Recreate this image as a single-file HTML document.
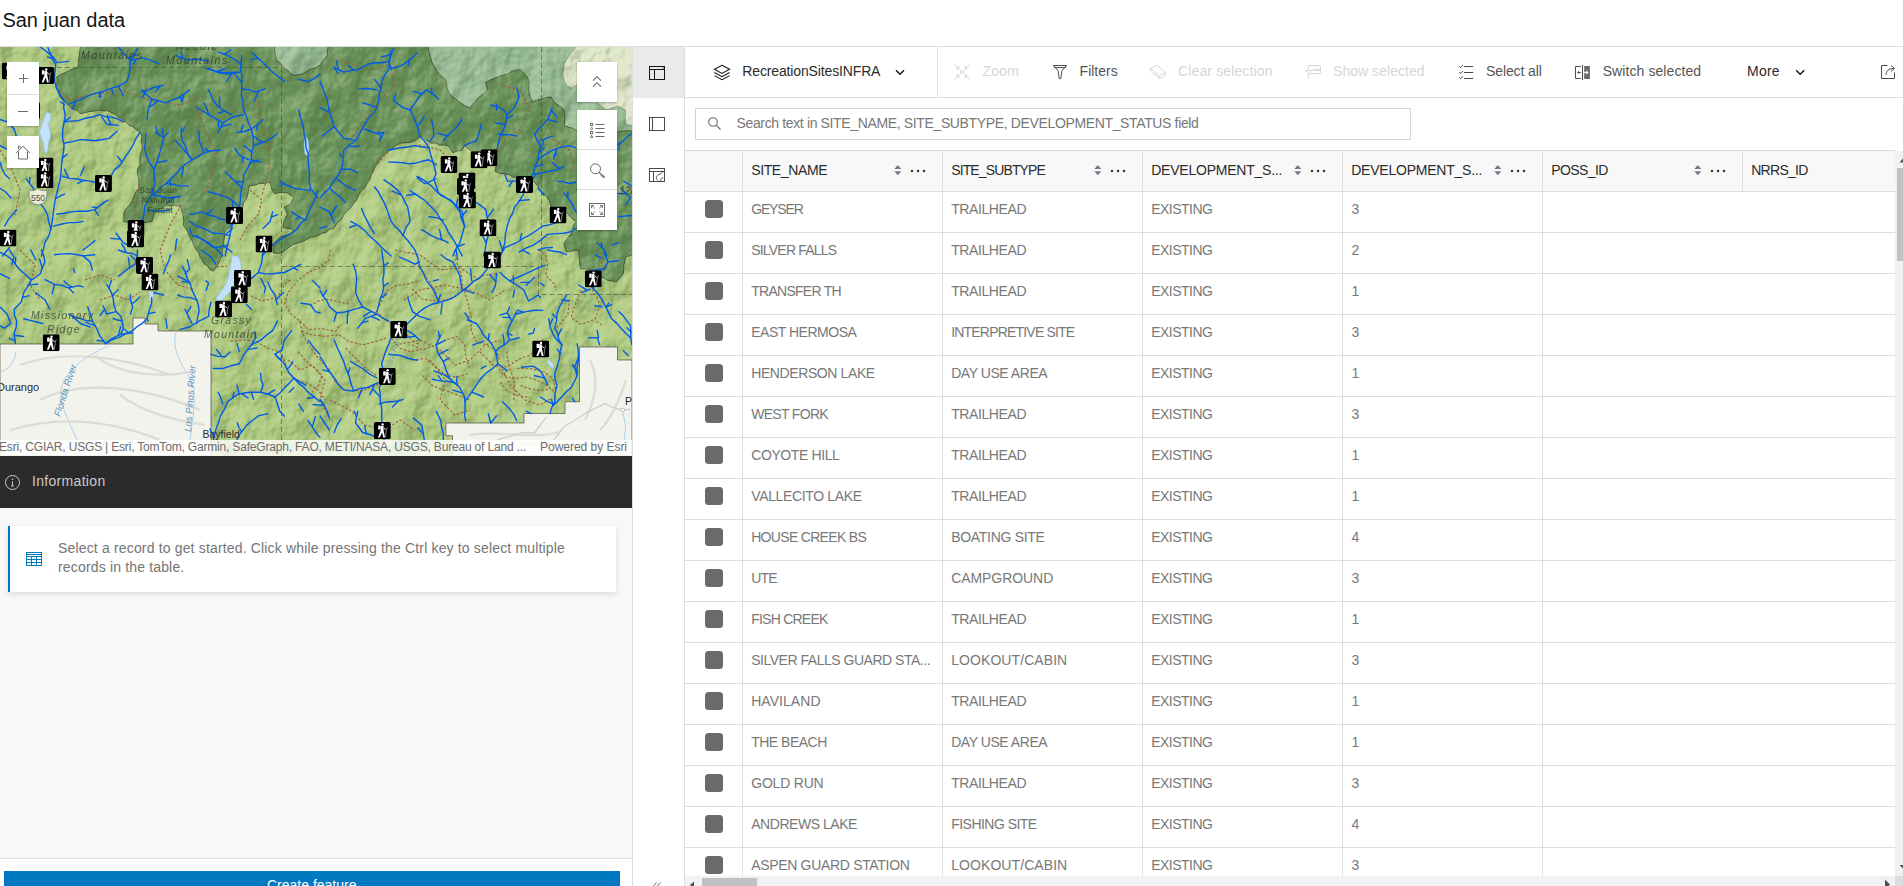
<!DOCTYPE html>
<html lang="en"><head><meta charset="utf-8"><title>San juan data</title>
<style>
html,body{margin:0;padding:0;}
body{width:1903px;height:886px;overflow:hidden;background:#fff;position:relative;font-family:"Liberation Sans",sans-serif;}
.t{position:absolute;white-space:nowrap;}
.b{position:absolute;}
svg{position:absolute;overflow:visible;}
</style></head><body>

<div class="t" style="left:2.5px;top:6.07px;font-size:20px;line-height:28px;color:#151515;letter-spacing:-0.072px;">San juan data</div>
<div class="b" style="left:0;top:46px;width:1903px;height:1px;background:#dedede"></div>
<div class="b" id="map" style="left:0;top:47px;width:632px;height:409px;overflow:hidden;background:#acc67f">
<svg style="left:0;top:0" width="632" height="409" viewBox="0 47 632 409">
<defs>
<filter id="hs" x="0" y="0" width="100%" height="100%" color-interpolation-filters="sRGB"><feTurbulence type="fractalNoise" baseFrequency="0.028 0.024" numOctaves="4" seed="11" result="n"/><feDiffuseLighting in="n" surfaceScale="9" diffuseConstant="1" lighting-color="#fff" result="L"><feDistantLight azimuth="225" elevation="30"/></feDiffuseLighting><feColorMatrix in="L" type="matrix" values="0 0 0 0 0.17  0 0 0 0 0.29  0 0 0 0 0.09  -0.85 0 0 0 0.425" result="D"/><feColorMatrix in="L" type="matrix" values="0 0 0 0 0.95  0 0 0 0 0.99  0 0 0 0 0.8  1.1 0 0 0 -0.55" result="W"/><feMerge><feMergeNode in="D"/><feMergeNode in="W"/></feMerge></filter>
<symbol id="hk" viewBox="0 0 17 17"><rect width="17" height="17" rx="1.8" fill="#000"/><circle cx="8.800" cy="2.400" r="1.200" fill="#fff"/><rect x="4.400" y="3.300" width="2.500" height="4.200" rx=".5" fill="#fff"/><path d="M7 3.800h2.600l.2 4.500 1.400 7.100h-1.700l-1.200-5-2.300 5h-1.800l2.700-7.200z" fill="#fff"/><path d="M9.500 5.600l2.600 1.900" stroke="#fff" stroke-width=".9" fill="none"/><path d="M13.500 5.200l-.9 3-1 7.200" stroke="#ddd" stroke-width=".6" fill="none"/></symbol>
</defs>
<rect x="0" y="47" width="632" height="409" fill="#aec981"/>
<path d="M428 40 L428 46 L428.7 50.0 L429.7 53.9 L430.6 57.9 L432.1 62.8 L434.6 67.1 L437.4 71.4 L439.8 74.6 L442.8 77.3 L445.9 79.9 L446.4 84.6 L447.4 89.1 L449.3 93.4 L452.3 96.6 L456.0 99.1 L459.4 101.9 L464.1 105.6 L469.6 107.8 L472.8 104.0 L476.1 100.2 L479.7 96.8 L483.9 93.8 L487.4 90 L485.7 82.4 L489.8 80.2 L494.2 78.6 L498.4 76.5 L503.1 75.4 L507.7 73.9 L511.9 71.4 L516.1 70.2 L520.4 69.7 L523.4 72.9 L526.4 76.2 L528.8 79.9 L529.0 85.8 L528.8 91.7 L530.4 96.8 L532.2 101.9 L536.8 100.3 L541.5 99.2 L546.1 97.6 L550.9 96.8 L553.0 100.6 L556 103.6 L560.5 106.7 L564.4 110.4 L564.8 115.5 L564.7 120.5 L564.4 125.6 L568.6 127.3 L573.1 128.3 L577 130.7 L581.6 130.2 L586.2 131.4 L590.8 130.8 L595.4 130.9 L600 131 L604.5 130.4 L608.9 130.6 L613.4 131.4 L617.8 132 L622.5 131.0 L627.2 130.7 L632 131 L640 131 L640 40Z" fill="#97ba97"/>
<path d="M275 40 L275 46 L274.5 50.8 L275.5 55.5 L276.1 60.2 L280.1 62.8 L282.8 66.9 L286.7 69.6 L290.1 72.8 L293.9 75.6 L297.9 74.6 L302.1 74.1 L305.8 72.1 L310.2 69.1 L315.5 67.8 L320 65 L323.4 60.2 L327.1 55.5 L327.5 50.7 L328.3 46 L328.3 40Z" fill="#97ba97"/>
<path d="M577 40 L577 46 L571.2 52.8 L564.4 62.9 L562.7 74.8 L566.1 85 L571.2 88.3 L577 85 L590 96 L598 103 L606 110 L618 106 L625.4 110 L625.4 124 L632 126 L640 126 L640 40Z" fill="#dfe6cb" stroke="#6a6a55" stroke-width=".5"/>
<path d="M80.6 46 L79.8 50.7 L79.4 55.5 L78.4 61.4 L78.2 67.3 L73.7 68.7 L69.4 70.4 L65.2 72.6 L60.9 74.2 L56.9 76.8 L57.1 81.7 L55.7 86.3 L57.6 91.0 L59.3 95.8 L61.9 99.5 L65.4 102.3 L68.7 105.3 L72.3 108.7 L77.0 110.3 L80.6 113.6 L85.3 112.6 L90.0 111.4 L94.9 111.0 L99.6 110 L103.5 110.9 L107.6 110.7 L111.4 112.4 L115.2 114.3 L118.5 117.1 L122.3 119.2 L125.6 121.9 L128.7 124.9 L132.7 126.6 L136.6 129.9 L141 132.5 L142.0 136.8 L141.3 141.3 L142.2 145.6 L142.1 149.7 L140.5 153.4 L139.9 157.4 L140.0 161.6 L139.6 165.8 L137.4 169.8 L137.5 174 L138.4 178.7 L138.8 183.4 L138.7 188.2 L135.9 191.8 L134.1 195.8 L132.7 200.1 L129.5 205.1 L125.6 209.6 L124.0 213.4 L124.0 217.5 L123.3 221.4 L128.0 222.3 L132.7 222.6 L138.6 222.1 L144.6 222.6 L151.7 221.4 L153.7 216.8 L154.1 211.9 L158.2 209.8 L162.4 207.9 L165.9 204.8 L170.5 206.0 L175.3 205.5 L180 206.4 L181.8 211.0 L183.2 215.8 L183.8 220.6 L183.2 225.3 L185.9 228.7 L188.1 232.3 L189.5 236.4 L191.9 240.4 L193.5 244.9 L195.8 249 L198.6 252.1 L199.5 256.3 L202.0 259.6 L203.7 263.3 L207.1 265.7 L209.7 269.0 L213.2 271.2 L217.9 264.8 L219.9 260.0 L221.9 255.3 L222.4 250.5 L223.5 245.9 L223.7 241.7 L224.4 237.5 L224.3 233.2 L226.3 229.5 L230.2 227.4 L232.2 223.7 L234.0 219.3 L237.7 216.0 L240.4 212.2 L242.4 207.9 L243.5 202.8 L246.6 198.6 L248 193.7 L248.5 189.7 L249.5 185.8 L254.8 185.1 L259.9 183.3 L265.3 183.4 L270 181.9 L271.7 189 L274.8 193.7 L279.0 192.6 L283.2 192.6 L287.5 192.9 L293.8 197.7 L290.6 204 L284.3 207.1 L287.5 214.3 L284.3 220.6 L282.7 226.9 L286.5 228.5 L290.6 228.5 L293.8 230 L290.6 233.2 L286.1 235.3 L281.2 236.4 L277.7 239.2 L274.8 242.7 L273.3 247.7 L273.3 253 L278.1 253.4 L282.7 252.2 L286.2 249.3 L289.9 246.7 L293.8 244.3 L298.0 242.7 L302.4 241.6 L306.4 239.5 L310.1 237.3 L314.5 236.8 L318.4 235.3 L322.2 233.2 L326.2 232.2 L329.3 229.3 L333.3 228.5 L338 222.2 L341.8 219.2 L343.8 214.6 L347.3 211.3 L350.7 207.9 L353.5 203.8 L356.6 199.9 L358.6 195.3 L361.1 191.2 L364.8 187.8 L367.0 183.5 L369.7 179.5 L371.3 174.6 L373.6 170 L376.2 164.7 L379.3 159.8 L382.8 155.8 L386.7 152.1 L391.1 149.1 L395.5 145.6 L400.6 143.2 L405.4 142.7 L410.2 142.5 L414.8 140.8 L418.0 137.9 L421.9 136.1 L425.5 139.6 L431.4 143.2 L435.7 143.0 L439.6 145.2 L443.8 145.0 L448 145.5 L450.5 149.0 L452.7 152.7 L457.3 151.0 L462.2 150.3 L464.6 145.5 L468.0 148.6 L471.7 151.5 L475.7 153.1 L480.0 153.4 L484.2 154.3 L488.5 154.7 L492.3 157.1 L496.6 157.4 L497.0 162.2 L495.8 166.9 L495.4 171.6 L500.0 173.4 L504.9 174 L509.0 174.6 L512.6 176.8 L516.7 177.6 L520.7 179.3 L525.0 179.6 L529.0 180.7 L533.3 181.1 L537.4 185.4 L540.4 190.6 L544.0 194.1 L547.5 197.7 L549.9 202.2 L551.1 207.2 L554.8 209.0 L558.9 209.2 L562.7 210.6 L566.5 211.9 L569.0 215.7 L572.4 218.7 L576 221.4 L573.6 225.1 L572.9 229.4 L571.3 233.3 L567.7 238.0 L564.1 242.7 L564.9 247.6 L566.5 252.2 L570.5 251.4 L574.4 250.4 L578.4 250 L579.1 255.9 L579.5 261.9 L580.7 269 L586.7 268.9 L592.6 270.1 L596.7 272.7 L600.0 276.4 L604.4 278.4 L608.1 280.4 L612.3 281.0 L616.3 282 L619.8 277.8 L623.4 273.7 L623.7 269.5 L623.9 265.3 L624.8 261.2 L625.8 257.1 L632 254.7 L636.0 254.9 L640 254 L640.7 249.9 L639.8 245.8 L640.5 241.7 L640.5 237.6 L640.4 233.5 L640.3 229.4 L640.5 225.3 L639.8 221.2 L640.4 217.1 L639.6 213.0 L640.0 208.9 L640.5 204.8 L640.3 200.7 L639.6 196.6 L640.8 192.5 L640.3 188.4 L640.1 184.3 L639.1 180.2 L640.1 176.1 L639.6 172.0 L640.3 167.9 L639.9 163.8 L640.6 159.7 L640.3 155.6 L640.5 151.5 L639.7 147.4 L640.3 143.3 L640.4 139.2 L640.6 135.1 L640 131 L636.0 131.3 L632 131 L627.2 130.7 L622.5 131.0 L617.8 132 L613.4 131.4 L608.9 130.6 L604.5 130.4 L600 131 L595.4 130.9 L590.8 130.8 L586.2 131.4 L581.6 130.2 L577 130.7 L573.1 128.3 L568.6 127.3 L564.4 125.6 L564.7 120.5 L564.8 115.5 L564.4 110.4 L560.5 106.7 L556 103.6 L553.0 100.6 L550.9 96.8 L546.1 97.6 L541.5 99.2 L536.8 100.3 L532.2 101.9 L530.4 96.8 L528.8 91.7 L529.0 85.8 L528.8 79.9 L526.4 76.2 L523.4 72.9 L520.4 69.7 L516.1 70.2 L511.9 71.4 L507.7 73.9 L503.1 75.4 L498.4 76.5 L494.2 78.6 L489.8 80.2 L485.7 82.4 L487.4 90 L483.9 93.8 L479.7 96.8 L476.1 100.2 L472.8 104.0 L469.6 107.8 L464.1 105.6 L459.4 101.9 L456.0 99.1 L452.3 96.6 L449.3 93.4 L447.4 89.1 L446.4 84.6 L445.9 79.9 L442.8 77.3 L439.8 74.6 L437.4 71.4 L434.6 67.1 L432.1 62.8 L430.6 57.9 L429.7 53.9 L428.7 50.0 L428 46 L428 40 L328.3 40 L328.3 46 L327.5 50.7 L327.1 55.5 L323.4 60.2 L320 65 L315.5 67.8 L310.2 69.1 L305.8 72.1 L302.1 74.1 L297.9 74.6 L293.9 75.6 L290.1 72.8 L286.7 69.6 L282.8 66.9 L280.1 62.8 L276.1 60.2 L275.5 55.5 L274.5 50.8 L275 46 L275 40 L80.6 40Z" fill="#6a925b" stroke="#38452f" stroke-width=".8" stroke-linejoin="round"/>
<rect x="0" y="47" width="632" height="409" filter="url(#hs)" opacity=".55"/>
<path d="M0 344 L133 344 L133 318 L145 318 L145 324 L158 324 L158 331 L211 331 L211 456 L0 456Z" fill="#f3f3ee" stroke="#4a4a40" stroke-width=".7"/>
<path d="M452.5 456 L452.5 435.7 L445.9 435.7 L445.9 423 L524 423 L524 413.5 L565 413.5 L565 401.7 L579.5 401.7 L579.5 347 L617.5 347 L617.5 360 L632 360 L632 456Z" fill="#f3f3ee" stroke="#4a4a40" stroke-width=".7"/>
<g fill="none" stroke="#3a4432" stroke-width="1" stroke-dasharray="5 3" opacity=".55">
<path d="M57 67.500H281.500V456M281.500 266.500H538.500V294.500H632M541.500 47V266.500"/>
</g>
<g fill="none" stroke="#9d5b3a" stroke-width="1.100" stroke-dasharray="2.500 1.800">
<path d="M404 300 L420 290 L445 285 L470 290 L490 300 L505 290"/>
<path d="M395 345 L420 340 L440 350 L455 365 L470 360 L485 345 L500 340"/>
<path d="M430 360 L445 380 L440 400 L455 415 L470 410"/>
<path d="M500 365 L510 385 L525 400 L540 405 L552 398"/>
<path d="M330 400 L350 410 L365 425 L385 430 L400 420 L415 430"/>
<path d="M395 250 L420 255 L440 270 L460 268 L480 280"/>
<path d="M288 360 L300 370 L312 365 L325 380 L320 400 L330 420"/>
<path d="M100 300 L115 295 L128 300 L140 292"/>
<path d="M85 280 L100 275 L115 280"/>
<path d="M181 205 L170 225 L160 250 L165 270 L178 285 L195 290"/>
<path d="M140 180 L137 200 L133 220 L128 235"/>
<path d="M250 190 L262 200 L258 215 L248 225 L240 240"/>
<path d="M56 87 L70 100 L90 95 L120 90 L150 100 L180 105 L205 95"/>
<path d="M195 105 L205 130 L215 150 L212 175 L205 195"/>
<path d="M258 100 L262 130 L270 150 L268 175 L262 195"/>
<path d="M340 60 L370 70 L390 65 L395 85 L380 100 L365 120 L350 140"/>
<path d="M372 170 L390 150 L420 145 L440 150 L455 165"/>
<path d="M500 85 L520 90 L530 110 L520 130 L505 140 L495 158"/>
<path d="M545 120 L555 140 L570 150 L575 170"/>
<path d="M0 150 L12 170 L20 190 L15 215"/>
<path d="M20 250 L35 265 L30 285 L40 300"/>
<path d="M330.4 250.0 L328.7 260.2 L318.5 268.6 L308.4 272.0 L298.2 280.5 L288.1 292.3 L284.7 304.2 L291.4 314.4 L299.9 321.1 L301.6 331.3 L308.4 344.8 L318.5 358.4 L328.7 368.5 L335.5 382.1 L345.6 390.6 L362.6 390.6 L379.5 383.8"/>
<path d="M299.9 321.1 L308.4 329.6 L321.9 328.7 L335.5 331.3 L340.6 324.5"/>
<path d="M301.6 331.3 L311.8 334.7 L325.3 336.4 L338.9 334.7 L349.0 341.4 L362.6 344.8 L376.1 341.4 L386.3 338.1"/>
<path d="M216.9 266.9 L227.1 266.1"/>
<path d="M250.8 295.7 L261.0 300.8 L271.1 299.1 L279.6 294.0 L284.7 283.9 L291.4 278.8"/>
<path d="M230.5 341.4 L244.0 339.8 L255.9 341.4 L267.7 348.2 L279.6 351.6 L284.7 361.8 L288.1 371.9 L294.8 378.7 L308.4 383.8 L318.5 390.6 L325.3 400.0"/>
<path d="M298.2 351.6 L305.0 360.1 L315.2 368.5 L321.9 375.3 L318.5 385.5 L311.8 392.3"/>
<path d="M376.1 311.0 L382.9 317.7 L389.7 322.8"/>
<path d="M379.5 305.9 L386.3 290.6 L396.4 285.6 L408.3 283.9 L420.0 280.5"/>
<path d="M406.6 334.7 L413.4 341.4 L420.0 344.8"/>
<path d="M391.4 338.1 L399.8 348.2 L410.0 351.6 L420.0 349.9"/>
<path d="M345.6 348.2 L355.8 358.4 L366.0 368.5 L376.1 375.3"/>
<path d="M310.1 305.9 L318.5 300.8 L328.7 299.1 L340.6 302.5 L350.7 304.2"/>
<path d="M412.0 289.0 L422.2 299.1 L435.7 300.8 L451.0 299.1 L462.8 290.6 L473.0 282.2 L483.1 275.4 L496.7 273.7"/>
<path d="M418.8 266.9 L428.9 280.5 L435.7 292.3 L437.4 300.8"/>
<path d="M454.3 250.0 L456.0 260.2 L461.1 273.7 L462.8 289.0"/>
<path d="M464.5 290.6 L467.9 302.5 L471.3 317.7 L471.3 331.3 L476.4 341.4 L486.5 344.8 L496.7 351.6 L500.1 361.8"/>
<path d="M412.0 344.8 L422.2 349.9 L432.3 346.5 L445.9 339.8 L457.7 336.4 L464.5 344.8 L466.2 358.4 L469.6 368.5"/>
<path d="M412.0 360.1 L425.5 358.4 L435.7 366.9 L445.9 375.3 L456.0 377.0 L467.9 373.6"/>
<path d="M422.2 375.3 L432.3 385.5 L445.9 390.6 L459.4 395.6 L469.6 400.0"/>
<path d="M479.7 351.6 L486.5 358.4 L493.3 365.2 L506.8 366.9 L520.4 358.4 L530.5 355.0 L544.1 338.1"/>
<path d="M496.7 365.2 L503.4 375.3 L513.6 378.7 L527.2 377.0 L537.3 380.4 L547.5 385.5 L554.3 392.3"/>
<path d="M506.8 351.6 L508.5 365.2 L513.6 378.7 L515.3 392.3 L513.6 400.0"/>
<path d="M517.0 368.5 L530.5 368.5 L544.1 371.9 L552.6 378.7 L555.9 388.9 L554.3 400.0"/>
<path d="M520.4 385.5 L530.5 388.9 L540.7 390.6 L550.9 388.9"/>
<path d="M500.1 382.1 L506.8 390.6 L517.0 395.6 L530.5 397.3"/>
<path d="M539.0 250.0 L545.8 255.1 L547.5 265.2 L545.8 275.4 L554.3 283.9 L555.9 290.6"/>
<path d="M569.5 299.1 L567.8 314.4 L561.0 322.8 L554.3 329.6"/>
<path d="M581.3 290.6 L574.6 305.9 L571.2 317.7 L581.3 324.5 L594.9 319.4 L600.0 305.9 L596.6 295.7 L591.5 289.0"/>
<path d="M596.6 321.1 L603.4 326.2"/>
<path d="M596.6 255.1 L603.4 265.2 L605.1 270.3"/>
</g>
<g fill="none" stroke="#8cc0ea" stroke-width=".7">
<path d="M108 346C95 352 80 360 70 372S58 395 66 415 78 440 85 456"/><path d="M176 332C172 345 178 360 188 375S194 410 190 440"/><path d="M0 372C8 370 14 364 16 352"/><path d="M622.800 412L625.700 425.400 624.200 440"/>
</g>
<g fill="none" stroke="#d9d9d2" stroke-width="2.2" opacity=".9">
<path d="M20 365C60 350 120 355 170 375M40 400C80 380 140 385 200 410M10 430C60 415 110 420 160 440M95 355C110 370 150 380 190 372M120 395C140 410 170 420 205 425"/>
<path d="M590 360C600 380 595 400 585 420M600 430C610 420 620 400 626 380M470 435C500 430 530 440 560 432M520 445C560 440 600 450 628 440"/>
</g>
<path d="M553.800 440L564 427 587.500 412 605 403.500 614 407.800 622.800 410 632 409.300M496.600 440L523 432.700 534.700 432.700 546.500 416.600" fill="none" stroke="#cfd0d6" stroke-width="1.400"/>
<circle cx="622.800" cy="410" r="1.800" fill="#fff" stroke="#b0b0b8" stroke-width=".8"/>
<g fill="#c4e0fa" stroke="#8cc0ee" stroke-width=".6">
<path d="M47 112L51 114 50.500 120 48 124 50 130 50.500 137 48.500 143 48 150 46 154 44 150 43.500 143 41 138 39.500 131 41.500 126 43 121 45 116Z"/>
<path d="M305.500 136l2.500 4 1 8-1.500 8-2.500-2-1-9z"/>
<path d="M232 256h6l2.500 6 .800 8-1.500 9-4 7-7 7-8 8-5.500 2 1.500-6 6-8 5-9 2.500-12z"/>
<path d="M149 291.500h4l.5 6-2 5.500-2-4z"/>
<path d="M546.500 358.500l5 3.500 2.500 4-1 2.500-4-3z"/>
</g>
<g fill="none" stroke="#005ce6" stroke-width="1.4" stroke-linecap="round" stroke-linejoin="round">
<path d="M47.4 46.0 L51.0 55.5 L55.7 65.0 L54.5 76.8 L55.0 82.9 L56.9 88.7 L60.2 94.7 L64.0 100.5 L63.7 107.7 L65.2 114.7 L64.3 121.9 L62.8 129.0 L62.6 137.4 L64.0 145.6 L63.5 151.9 L62.5 158.2 L61.6 164.5 L61.1 171.6 L60.4 178.7 L58.4 185.8 L56.9 193.0 L55.2 199.2 L54.3 205.6 L53.3 211.9 L52.4 220.2 L51.0 228.5 L48.7 235.9 L45.0 242.7 L43.3 249.4 L41.5 256.0"/>
<path d="M39.1 46.0 L48.6 53.1 L53.4 57.3 L56.9 62.6 L68.7 61.4"/>
<path d="M64.0 121.9 L71.1 121.1 L78.2 120.7 L85.2 118.3 L92.5 117.0 L99.6 114.7 L105.3 116.7 L111.4 117.1 L117.6 118.8 L123.3 121.9"/>
<path d="M101.9 117.1 L106.7 124.2 L118.5 125.4"/>
<path d="M64.0 143.2 L72.3 141.6 L80.6 139.6 L87.7 140.0 L94.8 140.8 L101.9 139.7 L109.0 138.4 L117.3 131.3"/>
<path d="M62.8 176.4 L69.2 178.4 L75.9 178.7 L82.9 180.3 L90.1 181.1 L94.8 182.3"/>
<path d="M80.6 175.2 L84.1 166.9"/>
<path d="M111.4 175.2 L114.7 169.6 L119.9 165.4 L123.3 159.8 L128.1 152.8 L132.7 145.6 L135.8 138.8 L139.9 132.5"/>
<path d="M117.3 156.2 L122.1 162.1"/>
<path d="M56.9 214.3 L64.0 213.3 L71.1 211.9 L79.0 211.1 L87.0 211.2 L94.8 209.6 L104.3 202.4 L107.9 200.1"/>
<path d="M94.8 209.6 L98.4 215.5"/>
<path d="M53.3 226.1 L61.0 224.3 L68.7 222.6 L75.9 222.6 L83.0 221.4"/>
<path d="M0.0 162.1 L1.8 168.3 L4.7 174.0 L9.5 178.7"/>
<path d="M26.1 178.7 L33.2 188.2 L37.9 197.7 L40.7 204.1 L45.0 209.6 L47.7 215.7 L48.7 222.3 L51.0 228.5"/>
<path d="M0.0 188.2 L5.9 192.3 L10.7 197.7"/>
<path d="M16.6 209.6 L12.3 214.9 L7.9 220.1 L4.7 226.1"/>
<path d="M0.0 119.5 L7.1 121.9 L14.2 129.0 L16.6 137.3 L19.0 145.6"/>
<path d="M0.0 145.6 L9.5 150.3"/>
<path d="M68.7 104.1 L74.7 101.9 L80.6 99.3 L87.6 96.1 L94.8 93.4 L101.0 92.4 L106.7 89.9 L112.5 87.9 L118.5 86.3 L126.8 81.6 L128.8 75.8 L129.9 69.7 L130.4 60.2 L123.3 53.1 L118.5 47.2"/>
<path d="M130.4 60.2 L136.4 59.4 L142.2 57.9 L150.8 60.1 L158.8 63.8"/>
<path d="M130.4 60.2 L135.1 53.1 L137.5 48.4"/>
<path d="M99.6 92.2 L100.7 97.0"/>
<path d="M111.4 88.7 L113.8 94.6"/>
<path d="M118.5 86.3 L123.3 95.8"/>
<path d="M142.2 89.9 L146.8 94.8 L151.7 99.3 L158.9 100.8 L165.9 102.9 L172.9 99.7 L180.1 97.0 L189.6 89.9"/>
<path d="M151.7 99.3 L148.1 110.0 L147.0 119.5"/>
<path d="M142.2 92.2 L148.2 89.9 L154.1 87.5 L163.6 85.1"/>
<path d="M180.1 97.0 L182.5 101.7"/>
<path d="M163.6 138.4 L161.2 147.9 L159.0 155.1 L156.9 162.3 L154.1 169.3 L154.1 176.5 L155.3 183.5 L152.7 189.2 L151.7 195.3 L148.0 201.2 L144.6 207.2 L144.0 214.4 L142.2 221.4"/>
<path d="M154.1 169.3 L149.9 163.7 L147.0 157.4 L144.6 147.9 L145.5 140.8 L145.8 133.7"/>
<path d="M151.7 195.3 L156.9 191.9 L160.9 187.2 L165.9 183.5 L170.8 179.0 L175.6 174.2 L180.1 169.3 L185.6 164.0 L192.0 159.8 L198.1 156.6 L203.9 152.7 L212.0 150.8 L220.4 150.3"/>
<path d="M192.0 159.8 L187.3 153.8 L182.5 147.9 L175.4 140.8"/>
<path d="M203.9 152.7 L201.7 146.7 L199.1 140.8 L199.1 131.3"/>
<path d="M165.9 183.5 L173.1 184.4 L180.1 185.9 L188.4 185.9"/>
<path d="M155.3 132.5 L163.6 137.3 L168.3 132.5"/>
<path d="M163.6 137.3 L162.4 129.0"/>
<path d="M151.7 195.3 L158.9 195.8 L165.9 197.7 L173.0 197.5 L180.1 196.5"/>
<path d="M147.0 209.6 L153.3 210.8 L159.5 211.2 L165.9 210.7 L170.7 209.6"/>
<path d="M181.3 127.8 L181.2 134.4 L182.5 140.8 L185.5 146.0 L187.0 152.0 L189.6 157.4"/>
<path d="M241.8 55.5 L241.2 62.6 L240.6 69.7 L241.9 76.0 L241.7 82.3 L241.8 88.7 L241.4 95.1 L242.9 101.3 L243.0 107.6 L246.5 117.1 L248.5 123.2 L251.3 129.0 L253.0 137.2 L253.6 145.6 L251.6 152.6 L251.3 159.8 L248.3 167.2 L244.1 174.0 L243.3 181.2 L241.8 188.2 L240.5 194.5 L240.2 200.9 L239.4 207.2 L236.4 214.3 L233.5 221.4 L231.3 228.4 L229.9 235.6 L228.3 242.4 L226.5 249.1 L225.2 256.0"/>
<path d="M241.8 65.0 L235.1 59.7 L227.6 55.5 L218.1 51.9"/>
<path d="M240.6 72.1 L234.1 73.0 L227.6 74.4 L221.3 72.3 L214.7 71.1 L208.6 68.5"/>
<path d="M241.8 88.7 L249.0 89.9 L256.0 92.2 L265.5 88.7"/>
<path d="M243.0 114.7 L232.3 117.1 L222.8 123.0 L215.9 118.6 L208.6 114.7 L202.8 111.0 L196.7 107.6"/>
<path d="M222.8 123.0 L218.1 132.5"/>
<path d="M208.6 114.7 L206.9 108.5 L203.9 102.9"/>
<path d="M251.3 129.0 L257.4 124.6 L263.1 119.5"/>
<path d="M251.3 129.0 L244.3 131.5 L237.0 132.5"/>
<path d="M253.6 145.6 L260.7 143.0 L267.9 140.8 L277.3 133.7"/>
<path d="M248.9 159.8 L239.4 155.0 L234.7 147.9"/>
<path d="M251.3 159.8 L260.7 162.1"/>
<path d="M241.8 188.2 L237.3 183.2 L232.3 178.7 L225.2 171.6"/>
<path d="M239.4 207.2 L234.0 201.8 L227.6 197.7 L220.5 195.2 L213.3 193.0 L208.6 191.8"/>
<path d="M233.5 221.4 L227.0 219.8 L220.4 219.0 L214.3 216.2 L207.6 214.7 L201.5 211.9 L195.6 213.6 L189.6 214.3"/>
<path d="M229.9 235.6 L221.7 233.6 L213.3 233.3 L208.0 230.4 L202.5 227.8 L196.7 226.1 L189.6 221.4"/>
<path d="M227.6 245.1 L220.5 246.8 L213.3 247.5 L208.0 243.3 L202.3 239.5 L196.7 235.6"/>
<path d="M252.4 53.1 L259.0 59.0 L265.5 65.0 L269.9 69.5 L274.6 73.7 L279.7 77.5 L284.4 81.6"/>
<path d="M298.7 110.0 L300.3 116.1 L302.1 122.2 L303.5 128.4 L304.2 134.7 L305.8 140.8 L305.9 147.2 L308.1 153.4 L308.1 159.8 L308.7 166.9 L309.5 174.0 L309.1 181.2 L310.5 188.2 L317.6 197.7"/>
<path d="M279.7 181.1 L286.6 185.0 L293.9 188.2 L302.2 189.4 L310.5 190.6"/>
<path d="M320.0 74.4 L314.4 78.6 L308.1 81.6 L298.7 79.2"/>
<path d="M317.6 190.6 L315.9 196.6 L313.4 202.2 L310.6 207.7 L308.1 213.3 L305.8 219.0 L300.6 223.3 L296.9 229.1 L291.6 233.3 L284.9 236.6 L278.6 240.7 L272.6 245.1"/>
<path d="M291.6 211.9 L298.4 216.6 L305.8 220.2"/>
<path d="M208.6 89.9 L213.3 100.5 L217.5 105.8 L222.8 110.0 L231.1 114.7"/>
<path d="M175.4 55.5 L181.4 57.7 L187.3 60.2 L196.7 59.0 L202.7 60.0 L208.6 61.4"/>
<path d="M206.2 68.5 L213.4 70.7 L220.4 73.3 L228.7 72.5 L237.0 72.1"/>
<path d="M272.6 211.9 L270.2 221.4 L263.1 228.5"/>
<path d="M189.6 228.5 L192.0 235.6 L197.8 237.3 L203.3 239.9 L208.6 242.7 L213.6 246.9 L218.6 251.0 L222.8 256.0"/>
<path d="M176.6 239.2 L175.4 249.9"/>
<path d="M116.1 233.3 L123.3 242.7 L132.7 247.5"/>
<path d="M83.0 249.9 L89.1 245.5 L94.8 240.4"/>
<path d="M2.4 256.0 L9.5 247.5"/>
<path d="M334.2 67.3 L343.7 72.1 L350.8 70.6 L357.9 69.7 L363.2 66.7 L368.6 64.2 L374.5 62.6 L381.7 62.7 L388.7 61.4 L391.1 68.5"/>
<path d="M388.7 61.4 L391.1 54.9 L393.5 48.4"/>
<path d="M334.2 67.3 L337.8 73.3"/>
<path d="M391.1 68.5 L400.6 66.1 L406.5 62.2 L412.0 57.8 L417.2 53.1"/>
<path d="M391.1 50.7 L390.4 57.0 L389.3 63.3 L388.7 69.7 L384.5 75.3 L381.6 81.6 L381.3 87.7 L379.3 93.4 L378.6 100.6 L376.9 107.6 L373.4 113.5 L368.3 118.2 L365.0 124.2 L361.7 129.6 L358.9 135.3 L355.6 140.8 L349.3 145.2 L343.7 150.3 L343.4 156.7 L342.8 163.1 L341.3 169.3 L337.8 175.8 L333.2 181.8 L329.5 188.2 L324.6 192.8 L320.0 197.7"/>
<path d="M359.1 88.7 L368.1 88.5 L376.9 89.9"/>
<path d="M355.6 140.8 L349.8 139.0 L343.7 138.4 L338.9 132.5 L334.2 126.6 L331.9 119.5 L329.5 112.4 L320.0 107.6"/>
<path d="M376.9 107.6 L369.9 105.0 L362.7 102.9"/>
<path d="M365.0 129.0 L370.9 131.5 L376.9 133.7 L384.0 132.5 L379.3 140.8"/>
<path d="M341.3 169.3 L350.8 169.3 L357.9 172.8"/>
<path d="M336.6 178.7 L346.1 185.9 L355.6 190.6"/>
<path d="M329.5 188.2 L335.2 193.3 L341.3 197.7 L344.9 202.4"/>
<path d="M320.0 207.2 L329.5 211.9 L334.2 222.6"/>
<path d="M320.0 228.5 L327.1 226.1"/>
<path d="M320.0 81.6 L322.7 87.4 L324.7 93.4 L327.2 99.5 L328.2 106.0 L329.5 112.4"/>
<path d="M334.2 126.6 L328.2 131.3 L322.4 136.1"/>
<path d="M395.9 93.4 L393.5 100.5 L403.0 107.6 L410.1 110.0 L414.8 119.5 L417.7 127.6 L419.6 136.1 L424.3 140.8 L429.0 147.9 L431.1 156.3 L433.8 164.5 L436.1 174.0 L433.8 178.7 L436.1 185.9 L438.5 193.0 L445.7 197.5 L452.7 202.4 L459.9 211.9 L461.5 219.3 L464.6 226.1 L462.2 234.4 L459.9 242.7 L455.8 249.1 L452.7 256.0"/>
<path d="M410.1 110.0 L414.9 102.9 L419.6 95.8 L426.7 89.9 L433.1 93.9 L438.5 99.3"/>
<path d="M417.2 126.6 L421.3 121.6 L424.3 115.9"/>
<path d="M431.4 119.5 L433.4 127.7 L433.8 136.1 L430.2 140.8"/>
<path d="M429.0 147.9 L421.9 147.0 L414.8 145.6 L407.7 147.0 L400.6 147.9 L394.6 148.7 L388.7 150.3"/>
<path d="M436.1 178.7 L430.3 181.3 L424.3 183.5 L417.2 177.6"/>
<path d="M443.3 140.8 L448.6 134.3 L455.1 129.0 L462.2 119.5"/>
<path d="M464.6 145.6 L470.3 142.8 L476.4 140.8 L479.1 132.6 L481.2 124.2"/>
<path d="M490.7 105.3 L496.8 106.4 L502.5 108.8 L507.3 114.7 L506.0 120.6 L504.9 126.6 L500.1 136.1 L497.8 145.6 L496.6 152.7"/>
<path d="M496.6 104.1 L496.6 110.0"/>
<path d="M495.4 123.0 L506.1 124.2"/>
<path d="M497.8 133.7 L504.0 135.0 L510.5 134.6 L516.7 136.1"/>
<path d="M516.7 87.5 L519.1 97.0 L514.4 107.6 L507.3 114.7"/>
<path d="M552.3 107.6 L550.2 113.6 L547.6 119.5 L543.4 124.4 L538.7 128.8 L534.5 133.7 L536.9 139.9 L540.4 145.6 L538.9 152.6 L538.1 159.8 L534.9 166.6 L533.3 174.0 L528.6 178.7"/>
<path d="M547.6 119.5 L557.0 121.9"/>
<path d="M551.1 110.0 L557.0 117.1"/>
<path d="M540.4 140.8 L546.3 138.4 L552.3 136.1"/>
<path d="M538.1 159.8 L544.9 154.6 L552.3 150.3 L560.4 147.3 L568.9 145.6 L576.0 147.9"/>
<path d="M553.5 156.2 L557.0 153.9"/>
<path d="M533.3 174.0 L540.5 173.2 L547.6 171.6 L556.1 170.0 L564.1 166.9"/>
<path d="M504.9 174.0 L507.3 181.1 L516.7 181.1"/>
<path d="M523.9 193.0 L519.8 200.6 L514.4 207.2 L512.5 213.7 L509.2 219.6 L507.3 226.1 L505.4 234.3 L504.9 242.7 L502.8 249.5 L500.1 256.0"/>
<path d="M557.0 222.6 L550.0 224.7 L542.8 226.1 L535.8 231.0 L528.6 235.6 L522.4 238.7 L516.7 242.7 L510.8 245.1 L504.9 247.5 L500.1 256.0"/>
<path d="M576.0 228.5 L570.4 231.7 L564.1 233.3 L555.8 233.6 L547.6 234.4 L540.7 240.1 L533.3 245.1 L525.9 248.1 L519.1 252.2"/>
<path d="M538.1 249.9 L545.1 247.9 L552.3 247.5"/>
<path d="M476.4 202.4 L485.9 209.6 L486.8 215.6 L488.3 221.4 L488.7 228.5 L488.3 235.6 L486.2 242.3 L485.3 249.2 L483.6 256.0"/>
<path d="M388.7 162.1 L395.2 162.2 L401.8 162.6 L408.2 163.8 L414.8 163.3 L421.8 161.3 L429.0 159.8 L436.1 164.5"/>
<path d="M417.2 176.4 L424.6 180.7 L431.4 185.9 L435.9 190.8 L440.9 195.3 L450.4 200.1 L456.5 205.8 L462.2 211.9 L462.9 219.1 L464.6 226.1"/>
<path d="M384.0 179.9 L391.4 184.9 L398.2 190.6 L402.0 195.8 L404.7 201.6 L407.7 207.2 L409.0 214.3 L410.1 221.4 L405.8 228.1 L403.0 235.6 L407.4 240.0 L411.2 244.9 L414.8 249.9"/>
<path d="M374.5 187.0 L378.3 191.8 L381.1 197.1 L384.0 202.4 L386.7 208.6 L388.8 215.0 L391.1 221.4 L394.8 226.4 L399.5 230.5 L403.0 235.6"/>
<path d="M410.1 190.6 L417.3 195.3 L424.3 200.1 L430.3 205.9 L436.1 211.9 L440.5 219.2 L445.6 226.1 L448.1 232.0 L451.8 237.3 L455.1 242.7 L458.8 249.3 L462.2 256.0"/>
<path d="M361.5 208.4 L364.2 215.0 L367.4 221.4 L370.5 227.6 L374.5 233.3"/>
<path d="M350.8 221.4 L358.3 225.5 L365.0 230.9 L370.3 236.7 L376.2 241.8 L381.6 247.5 L386.3 251.8 L391.1 256.0"/>
<path d="M421.9 229.7 L431.4 235.6 L436.8 238.4 L442.7 239.8 L448.0 242.7"/>
<path d="M429.0 216.7 L436.4 217.6 L443.3 220.2"/>
<path d="M616.3 145.6 L622.6 141.3 L628.1 136.1 L631.9 133.7"/>
<path d="M621.0 188.2 L625.5 193.2 L630.5 197.7 L625.8 204.8"/>
<path d="M618.7 216.7 L625.3 216.0 L631.9 215.5"/>
<path d="M631.9 185.9 L623.4 181.1"/>
<path d="M597.3 242.7 L604.4 249.9 L606.8 256.0"/>
<path d="M611.6 245.1 L618.7 242.7"/>
<path d="M564.1 193.0 L571.3 202.4 L576.0 211.9"/>
<path d="M538.1 188.2 L544.0 195.3"/>
<path d="M557.0 181.1 L563.1 181.6 L568.9 183.5 L576.0 182.3"/>
<path d="M41.5 250.0 L43.7 255.8 L45.0 261.9 L42.4 267.7 L40.3 273.7 L30.8 280.8 L27.5 286.9 L23.7 292.7 L21.3 302.1 L14.2 309.3 L14.6 315.4 L16.6 321.1 L16.2 327.2 L14.2 333.0 L15.4 343.6"/>
<path d="M0.0 252.4 L6.3 255.4 L11.9 259.5 L19.0 269.0 L25.0 274.2 L30.8 279.6"/>
<path d="M0.0 273.7 L9.5 278.4"/>
<path d="M0.0 306.9 L7.1 314.0 L10.7 323.5 L4.7 328.2 L0.0 325.9"/>
<path d="M23.7 318.7 L33.2 321.1 L42.7 323.5"/>
<path d="M14.2 335.3 L23.7 336.5"/>
<path d="M30.8 250.0 L35.6 259.5"/>
<path d="M9.5 250.0 L14.2 257.1 L11.9 264.2"/>
<path d="M54.5 254.7 L62.8 253.9 L71.1 253.6 L77.1 254.7 L83.0 255.9 L94.8 254.7"/>
<path d="M83.0 255.9 L90.1 261.9 L92.4 270.1"/>
<path d="M73.5 269.0 L74.7 272.5"/>
<path d="M45.0 279.6 L54.5 284.4 L61.8 285.4 L68.7 287.9 L78.2 285.6 L83.0 286.7"/>
<path d="M54.5 284.4 L52.1 293.9"/>
<path d="M68.7 287.9 L73.5 292.7"/>
<path d="M35.6 292.7 L45.0 299.8 L49.8 309.3"/>
<path d="M106.7 284.4 L111.4 292.7 L113.2 298.5 L113.8 304.5 L116.1 311.6 L120.9 316.4 L122.3 322.3 L123.3 328.2 L120.9 334.1 L111.4 338.9 L105.5 343.6"/>
<path d="M116.1 311.6 L106.7 314.0 L103.1 305.7"/>
<path d="M87.7 306.9 L90.4 313.9 L92.4 321.1 L96.4 328.0 L99.6 335.3 L105.5 343.6"/>
<path d="M130.4 295.0 L130.7 301.1 L132.7 306.9 L130.4 314.0"/>
<path d="M120.9 334.1 L132.7 333.0"/>
<path d="M92.4 321.1 L86.3 320.7 L80.6 318.7 L74.4 316.9 L68.7 314.0"/>
<path d="M71.1 315.2 L75.8 319.4 L80.6 323.5 L90.1 327.0"/>
<path d="M118.5 250.0 L125.4 252.5 L132.7 253.6 L137.5 255.9"/>
<path d="M137.5 250.0 L137.0 257.2 L135.1 264.2 L128.9 267.9 L123.3 272.5 L118.5 276.1"/>
<path d="M154.1 292.7 L163.6 295.0"/>
<path d="M151.7 297.4 L151.7 303.3 L149.0 310.9 L147.0 318.7 L148.1 321.1"/>
<path d="M147.0 318.7 L142.6 323.1 L137.3 326.5 L132.7 330.6 L125.4 333.8 L118.5 337.7 L111.6 339.8 L105.5 343.6"/>
<path d="M170.7 254.7 L168.8 260.9 L165.9 266.6 L163.6 273.7"/>
<path d="M182.5 266.6 L185.5 272.3 L187.3 278.4 L190.4 284.1 L192.0 290.3 L196.7 299.8 L198.5 305.6 L199.1 311.6 L197.5 317.5 L196.7 323.5"/>
<path d="M177.8 276.1 L187.3 280.8"/>
<path d="M177.8 295.0 L183.5 297.1 L189.6 297.4 L196.7 299.8"/>
<path d="M184.9 309.3 L189.6 318.7 L192.0 323.5"/>
<path d="M165.9 318.7 L167.1 328.2"/>
<path d="M211.0 302.1 L209.2 309.2 L208.6 316.4 L199.1 321.1 L189.6 327.0 L180.1 329.4"/>
<path d="M206.2 290.3 L208.6 283.2 L206.2 280.8"/>
<path d="M201.5 250.0 L211.0 257.1 L215.7 264.2"/>
<path d="M187.3 259.5 L189.6 269.0 L184.9 273.7"/>
<path d="M263.1 250.0 L261.9 261.9 L258.4 272.5 L251.3 278.4"/>
<path d="M258.4 272.5 L265.4 273.9 L272.6 273.7 L284.4 272.5 L293.9 267.8 L301.0 264.2"/>
<path d="M293.9 267.8 L297.5 270.1"/>
<path d="M260.7 278.4 L265.5 287.9 L264.3 292.7"/>
<path d="M267.9 282.0 L270.7 288.9 L275.0 295.0 L277.3 304.5"/>
<path d="M246.5 304.5 L251.3 309.3"/>
<path d="M312.9 280.8 L320.0 287.9"/>
<path d="M301.0 303.3 L310.5 304.5 L315.3 311.6 L320.0 312.8"/>
<path d="M308.1 340.1 L315.3 349.6 L320.0 354.3"/>
<path d="M277.3 321.1 L272.6 330.6 L266.5 335.1 L260.7 340.1 L251.3 344.8 L244.1 354.3 L239.4 363.8 L231.0 365.8 L222.8 368.5 L213.3 368.5"/>
<path d="M251.3 344.8 L256.0 337.7 L254.8 331.8"/>
<path d="M239.4 351.9 L237.0 343.6"/>
<path d="M291.6 330.6 L284.4 340.1 L282.1 349.6 L275.0 354.3 L279.6 359.1 L284.4 363.8 L289.2 373.3 L293.9 378.0 L289.4 383.0 L284.7 387.8 L280.2 392.7 L275.0 397.0 L268.0 394.2 L260.7 392.2 L251.3 392.2 L244.1 393.0 L237.0 394.6 L227.6 401.7 L224.5 409.1 L220.4 415.9 L218.3 423.1 L215.7 430.1 L213.3 439.6"/>
<path d="M218.1 392.2 L220.9 398.0 L222.8 404.1"/>
<path d="M237.0 385.1 L239.4 394.6"/>
<path d="M251.3 392.2 L253.6 399.3"/>
<path d="M260.7 373.3 L261.0 379.4 L263.1 385.1 L260.7 392.2"/>
<path d="M275.0 354.3 L279.7 359.0"/>
<path d="M293.9 378.0 L301.0 382.7 L305.8 385.1"/>
<path d="M289.2 392.2 L293.9 387.5"/>
<path d="M293.9 378.0 L298.3 383.1 L303.7 387.1 L308.1 392.2 L314.1 396.9 L320.0 401.7"/>
<path d="M275.0 397.0 L277.6 404.0 L279.7 411.2 L284.4 415.9"/>
<path d="M298.7 404.1 L303.4 411.2"/>
<path d="M267.9 413.6 L258.4 415.9 L252.4 420.5 L246.5 425.4 L239.4 434.9 L237.0 439.6"/>
<path d="M308.1 420.7 L312.9 427.8 L317.6 434.9 L320.0 437.3"/>
<path d="M211.0 354.3 L218.0 356.4 L225.2 356.7 L229.9 351.9"/>
<path d="M490.7 264.2 L483.6 273.7 L479.3 278.2 L473.6 281.1 L469.3 285.6 L459.9 292.7 L454.4 296.9 L448.0 299.8 L439.7 302.3 L431.4 304.5 L425.3 307.7 L419.6 311.6 L414.9 316.4 L410.1 321.1 L403.0 328.2 L397.2 333.1 L391.1 337.7 L388.9 343.7 L386.4 349.6 L383.9 356.7 L381.6 363.8 L384.0 373.3 L382.3 380.6 L379.3 387.5 L380.2 394.6 L380.4 401.7 L381.8 408.7 L381.6 415.9 L382.1 425.4 L383.1 432.5 L384.0 439.6"/>
<path d="M320.0 290.3 L323.1 295.8 L326.9 301.0 L329.5 306.9 L336.6 312.8 L343.8 312.2 L350.8 310.4 L356.8 308.7 L362.7 306.9 L369.7 310.6 L376.9 314.0 L382.6 318.0 L388.7 321.1"/>
<path d="M353.2 264.2 L355.6 271.1 L356.7 278.4 L356.1 285.5 L355.6 292.7 L358.6 300.1 L362.7 306.9"/>
<path d="M336.6 312.8 L334.2 321.1"/>
<path d="M348.4 310.4 L347.3 316.9 L347.3 323.5"/>
<path d="M376.9 314.0 L370.9 316.3 L365.0 318.7 L357.9 328.2"/>
<path d="M381.6 250.0 L382.8 257.9 L383.8 265.7 L384.0 273.7 L382.8 280.0 L383.7 286.4 L382.8 292.7 L380.1 298.8 L378.8 305.3 L376.9 311.6"/>
<path d="M399.4 257.1 L407.3 260.3 L414.8 264.2 L419.6 261.9"/>
<path d="M414.8 250.0 L417.9 258.1 L419.6 266.6 L423.6 273.5 L426.7 280.8 L433.8 290.3 L438.5 301.0"/>
<path d="M433.8 280.8 L438.5 279.6"/>
<path d="M440.9 254.7 L446.4 259.0 L452.7 261.9 L456.7 268.8 L459.9 276.1 L460.8 283.2 L462.2 290.3"/>
<path d="M456.3 250.0 L457.5 259.5"/>
<path d="M470.5 269.0 L471.7 280.8"/>
<path d="M407.7 297.4 L409.9 304.6 L412.4 311.6 L419.6 316.4 L430.2 319.9"/>
<path d="M442.1 303.3 L440.9 314.0"/>
<path d="M407.7 330.6 L414.1 334.8 L419.6 340.1"/>
<path d="M334.2 340.1 L337.1 347.3 L340.4 354.4 L343.7 361.4 L345.9 368.5 L349.0 375.4 L350.8 382.7 L353.2 389.9"/>
<path d="M350.8 361.4 L356.6 365.1 L362.7 368.5 L369.4 373.9 L376.9 378.0"/>
<path d="M320.0 356.7 L323.8 362.4 L327.1 368.5 L334.2 378.0 L338.4 384.4 L343.7 389.9 L353.2 391.0 L360.1 388.4 L367.4 387.5 L378.1 382.7"/>
<path d="M388.7 354.3 L400.6 355.5 L408.7 358.5 L417.2 360.2"/>
<path d="M379.3 404.1 L385.0 402.2 L391.1 401.7 L397.2 401.3 L403.0 399.3"/>
<path d="M357.9 411.2 L356.3 417.0 L355.6 423.0 L362.7 432.5 L369.9 434.5 L376.9 437.3"/>
<path d="M320.0 399.3 L324.0 405.0 L327.1 411.2 L329.5 418.3"/>
<path d="M413.6 418.3 L421.9 425.4 L423.0 432.5 L424.3 439.6"/>
<path d="M436.1 411.2 L440.9 420.7 L441.5 427.0 L443.3 433.2 L443.3 439.6"/>
<path d="M341.3 418.3 L337.1 425.1 L334.2 432.5"/>
<path d="M320.0 415.9 L324.7 423.0 L329.5 430.1"/>
<path d="M440.9 335.3 L436.1 344.8 L438.5 354.3 L443.3 361.4 L445.6 368.5 L449.2 378.0 L454.4 382.9 L459.9 387.5 L464.6 397.0 L465.0 403.3 L465.1 409.6 L464.6 415.9 L465.8 420.7"/>
<path d="M436.1 344.8 L445.6 340.1"/>
<path d="M438.5 354.3 L448.0 349.6"/>
<path d="M433.8 370.9 L443.3 374.4 L449.2 378.0"/>
<path d="M432.6 379.2 L440.0 380.9 L447.6 381.4 L455.1 382.7"/>
<path d="M471.7 392.2 L477.7 394.5 L483.6 397.0"/>
<path d="M443.3 361.4 L449.2 357.9"/>
<path d="M496.6 273.7 L495.4 285.6 L491.9 292.7"/>
<path d="M500.1 272.5 L504.6 276.9 L509.6 280.8 L517.1 285.0 L523.9 290.3 L528.6 301.0 L538.1 295.0 L540.4 297.4"/>
<path d="M509.6 280.8 L515.1 278.3 L520.6 276.0 L526.2 273.7 L532.4 270.7 L538.6 267.6 L545.2 265.4"/>
<path d="M526.2 285.6 L534.5 277.3"/>
<path d="M540.4 283.2 L544.0 285.6"/>
<path d="M514.4 290.3 L513.2 297.4"/>
<path d="M509.6 306.9 L507.3 312.8 L512.0 321.1 L509.0 326.8 L507.3 333.0 L509.6 340.1 L505.1 344.3 L499.6 347.3 L495.4 351.9 L496.9 357.8 L497.8 363.8 L492.4 368.7 L486.4 372.9 L481.2 378.0 L476.4 385.1 L471.7 392.2 L464.6 401.7"/>
<path d="M500.1 315.2 L507.3 312.8"/>
<path d="M516.7 314.0 L526.2 311.6 L534.4 310.3 L542.8 310.4"/>
<path d="M512.0 321.1 L516.7 311.6"/>
<path d="M507.3 333.0 L512.0 335.3"/>
<path d="M509.6 340.1 L519.1 337.7"/>
<path d="M467.0 319.9 L476.4 323.5 L480.4 329.2 L483.6 335.3 L488.8 340.2 L493.0 346.0 L496.6 354.3"/>
<path d="M472.9 344.8 L483.6 341.3"/>
<path d="M497.8 363.8 L507.3 370.9"/>
<path d="M481.2 368.5 L485.9 366.1"/>
<path d="M566.5 295.0 L563.0 301.0 L559.4 306.9 L557.0 314.0 L556.5 321.2 L554.7 328.2 L557.8 333.4 L558.7 339.6 L561.8 344.8 L560.0 351.8 L559.4 359.0 L557.2 366.2 L554.7 373.3 L555.0 379.4 L557.0 385.1 L555.1 393.3 L554.7 401.7 L551.8 407.4 L549.9 413.6"/>
<path d="M561.8 299.8 L568.9 301.0"/>
<path d="M548.7 318.7 L550.3 327.2 L553.5 335.3 L557.4 340.3 L561.8 344.8"/>
<path d="M528.6 334.1 L533.3 333.0 L534.5 328.2"/>
<path d="M521.5 367.3 L533.3 366.1 L540.4 370.9 L544.5 377.7 L547.6 385.1"/>
<path d="M540.4 397.0 L547.6 401.7 L553.5 404.1"/>
<path d="M577.2 343.6 L578.4 352.5 L578.4 361.4 L576.9 368.4 L577.2 375.6 L574.3 381.6 L571.3 387.5 L566.1 391.7 L561.8 397.0 L557.0 401.7 L553.5 405.3"/>
<path d="M573.6 365.0 L577.2 375.6"/>
<path d="M572.4 398.1 L574.8 401.7"/>
<path d="M502.5 401.7 L509.6 408.8 L513.8 414.4 L516.7 420.7"/>
<path d="M488.3 413.6 L490.7 423.0 L496.6 415.9"/>
<path d="M526.2 411.2 L531.0 413.6"/>
<path d="M590.2 285.6 L597.3 292.7 L602.1 299.8 L605.4 306.0 L608.5 312.4 L611.6 318.7 L616.6 323.1 L621.0 328.2 L625.6 333.1 L630.5 337.7"/>
<path d="M581.9 292.7 L590.2 289.1"/>
<path d="M606.8 306.9 L611.6 304.5"/>
<path d="M595.0 305.7 L602.1 306.9"/>
<path d="M618.7 311.6 L623.3 315.8 L626.9 320.9 L630.5 325.9 L630.8 332.2 L630.8 338.5 L631.9 344.8"/>
<path d="M589.0 337.7 L597.3 337.7 L599.7 344.8"/>
<path d="M597.3 330.6 L598.5 337.7"/>
<path d="M623.4 350.7 L628.1 355.5"/>
<path d="M604.4 252.4 L608.0 261.9 L604.4 269.0 L597.3 269.8 L590.2 271.3"/>
<path d="M608.0 261.9 L618.7 260.7"/>
<path d="M595.0 254.7 L602.1 258.3"/>
<path d="M547.6 250.0 L554.0 251.2 L560.4 252.3 L566.5 254.7"/>
<path d="M52.8 59.2 L47.7 56.8"/>
<path d="M64.4 104.7 L60.2 101.7"/>
<path d="M63.8 122.9 L66.8 119.8 L70.4 117.5"/>
<path d="M62.4 157.9 L67.1 154.2"/>
<path d="M55.8 198.6 L60.0 196.0 L64.6 194.1"/>
<path d="M111.0 124.6 L108.9 120.0 L107.3 115.2"/>
<path d="M68.4 177.4 L66.3 173.4 L64.5 169.2"/>
<path d="M84.0 180.1 L77.6 183.6"/>
<path d="M97.3 207.7 L92.0 206.9"/>
<path d="M29.6 183.4 L29.8 177.6"/>
<path d="M75.7 101.3 L74.2 105.3 L72.4 109.2"/>
<path d="M101.1 91.6 L99.1 96.9"/>
<path d="M128.1 57.9 L132.8 55.9 L137.9 54.9"/>
<path d="M136.3 59.0 L133.5 63.9"/>
<path d="M157.9 100.9 L154.3 104.1 L150.0 106.5"/>
<path d="M184.0 94.1 L182.1 101.0"/>
<path d="M146.6 90.5 L142.5 97.2"/>
<path d="M160.1 86.0 L155.3 92.2"/>
<path d="M156.3 162.6 L161.6 161.8 L166.8 160.8"/>
<path d="M169.9 179.5 L170.6 185.8"/>
<path d="M183.5 166.6 L182.7 171.7 L181.6 176.8"/>
<path d="M210.0 151.8 L205.1 148.7"/>
<path d="M157.8 133.9 L155.8 126.7"/>
<path d="M174.1 197.0 L170.7 200.2 L167.0 203.1"/>
<path d="M181.7 132.3 L185.0 127.2"/>
<path d="M241.4 82.1 L237.8 77.9 L234.4 73.6"/>
<path d="M252.5 152.6 L248.5 149.3 L244.5 145.9"/>
<path d="M249.5 163.4 L254.0 161.7 L258.5 159.9"/>
<path d="M223.8 54.1 L227.5 52.3 L230.9 49.9"/>
<path d="M217.3 71.2 L221.1 70.0 L224.9 68.6"/>
<path d="M258.7 91.2 L256.4 96.0 L254.4 100.9"/>
<path d="M218.7 120.6 L218.5 126.8"/>
<path d="M220.7 127.3 L225.6 125.4 L230.8 124.3"/>
<path d="M257.9 123.7 L256.3 129.7"/>
<path d="M241.1 131.5 L243.1 124.6"/>
<path d="M263.1 142.4 L258.3 139.8 L254.0 136.4"/>
<path d="M242.6 156.6 L242.9 162.3"/>
<path d="M235.2 181.6 L239.5 181.6 L243.8 182.0"/>
<path d="M232.7 201.8 L233.0 208.3"/>
<path d="M226.1 220.0 L230.9 225.1"/>
<path d="M206.4 213.7 L210.1 211.8 L213.2 209.0"/>
<path d="M225.1 234.9 L228.8 231.6 L232.5 228.2"/>
<path d="M223.1 245.9 L227.5 248.8 L231.8 252.0"/>
<path d="M258.0 58.2 L251.0 59.6"/>
<path d="M284.4 183.5 L280.1 186.3"/>
<path d="M300.7 217.2 L295.7 218.6"/>
<path d="M220.0 107.2 L219.4 102.4 L219.7 97.5"/>
<path d="M225.0 111.2 L218.6 113.1"/>
<path d="M183.0 58.5 L181.0 51.4"/>
<path d="M232.6 72.4 L229.4 76.8 L226.4 81.4"/>
<path d="M271.3 217.1 L277.7 214.7"/>
<path d="M120.5 239.0 L115.5 238.8 L110.6 238.4"/>
<path d="M338.6 69.5 L337.2 65.2 L336.9 60.7"/>
<path d="M353.6 70.4 L348.6 65.6"/>
<path d="M391.5 53.8 L386.7 55.8 L381.5 56.7"/>
<path d="M409.3 59.3 L408.3 65.5"/>
<path d="M380.5 87.2 L377.7 83.2 L374.5 79.5"/>
<path d="M348.7 146.3 L354.1 146.5 L359.4 146.0"/>
<path d="M342.7 158.0 L340.0 153.5"/>
<path d="M381.2 137.4 L378.3 131.8"/>
<path d="M331.0 215.3 L333.7 210.6 L336.4 205.8"/>
<path d="M461.7 217.2 L463.9 213.7 L466.7 210.8"/>
<path d="M457.8 246.5 L464.4 244.1"/>
<path d="M421.9 93.9 L417.6 92.3 L413.0 91.6"/>
<path d="M432.1 94.2 L431.5 88.0"/>
<path d="M448.3 135.8 L443.0 134.9 L437.9 133.2"/>
<path d="M506.4 119.0 L512.8 115.3"/>
<path d="M539.3 152.2 L544.3 147.9"/>
<path d="M535.8 166.6 L542.8 164.7"/>
<path d="M543.9 139.4 L542.7 144.6"/>
<path d="M557.0 149.0 L554.9 153.9 L553.7 159.1"/>
<path d="M537.0 173.4 L532.1 179.4"/>
<path d="M559.5 168.2 L555.6 165.4 L552.0 162.2"/>
<path d="M512.5 181.1 L509.2 186.1"/>
<path d="M518.8 200.7 L524.0 200.1 L529.2 199.7"/>
<path d="M502.3 250.0 L501.0 245.4 L499.4 240.8"/>
<path d="M519.8 240.9 L521.7 233.6"/>
<path d="M522.9 250.3 L529.6 253.9"/>
<path d="M487.5 217.3 L490.7 213.5 L493.3 209.3"/>
<path d="M486.5 243.2 L482.8 236.5"/>
<path d="M456.2 205.9 L457.7 199.0"/>
<path d="M400.6 194.8 L396.4 192.8 L392.1 191.1"/>
<path d="M415.2 194.0 L411.0 194.7 L406.8 195.4"/>
<path d="M356.1 225.0 L349.7 227.5"/>
<path d="M441.7 240.0 L440.6 234.7 L439.5 229.4"/>
<path d="M619.8 142.7 L618.8 149.8"/>
<path d="M626.7 193.9 L621.3 193.7 L615.9 193.4"/>
<path d="M602.2 247.6 L601.5 242.6"/>
<path d="M567.6 197.6 L567.8 192.3"/>
<path d="M42.3 268.6 L41.0 263.8 L39.5 259.1"/>
<path d="M28.1 285.3 L32.9 284.6 L37.8 284.0"/>
<path d="M22.5 297.5 L29.0 295.7"/>
<path d="M15.1 340.7 L9.3 338.4"/>
<path d="M15.1 263.8 L15.8 257.5"/>
<path d="M71.9 287.1 L67.6 284.5 L64.0 281.0"/>
<path d="M108.8 288.1 L111.4 280.6"/>
<path d="M112.0 295.9 L114.9 292.7 L118.0 289.7"/>
<path d="M121.8 320.7 L117.3 320.0 L113.1 318.3"/>
<path d="M118.3 335.4 L119.4 331.1 L120.7 326.8"/>
<path d="M104.7 309.5 L99.9 315.6"/>
<path d="M94.6 325.4 L90.2 324.1 L85.9 322.4"/>
<path d="M103.9 341.3 L97.0 340.4"/>
<path d="M132.1 303.7 L136.1 300.8 L139.5 297.1"/>
<path d="M129.0 333.3 L124.3 329.3"/>
<path d="M125.9 251.9 L124.1 247.6 L121.5 243.8"/>
<path d="M135.7 260.5 L130.9 255.6"/>
<path d="M129.7 268.0 L129.2 262.8 L128.3 257.6"/>
<path d="M148.6 313.6 L155.2 312.2"/>
<path d="M188.9 282.5 L182.4 281.4"/>
<path d="M186.8 313.1 L190.9 306.6"/>
<path d="M262.6 255.3 L265.8 251.8 L268.8 248.1"/>
<path d="M276.2 299.8 L279.7 296.0 L283.5 292.6"/>
<path d="M247.8 349.4 L252.4 348.9 L256.9 348.0"/>
<path d="M280.7 360.1 L282.0 355.0"/>
<path d="M287.1 369.2 L290.4 365.7 L292.7 361.5"/>
<path d="M266.9 394.3 L270.9 392.2 L274.9 389.9"/>
<path d="M242.0 393.8 L248.2 398.1"/>
<path d="M232.7 397.8 L234.0 392.5"/>
<path d="M214.0 436.8 L211.7 433.0 L210.0 428.9"/>
<path d="M314.3 397.2 L307.3 398.2"/>
<path d="M241.7 431.8 L239.0 427.5 L237.3 422.7"/>
<path d="M312.3 427.0 L313.9 421.7 L315.5 416.5"/>
<path d="M221.5 356.1 L218.9 352.8 L216.3 349.5"/>
<path d="M464.1 289.5 L468.9 291.6 L473.8 293.3"/>
<path d="M437.2 302.9 L439.1 298.9 L440.4 294.7"/>
<path d="M381.8 380.0 L387.1 378.4"/>
<path d="M380.0 396.4 L376.5 393.0 L373.2 389.4"/>
<path d="M323.2 295.8 L326.8 290.1"/>
<path d="M371.6 311.4 L367.4 313.6 L363.7 316.4"/>
<path d="M370.7 316.4 L375.2 318.0 L379.4 320.2"/>
<path d="M361.9 322.9 L368.0 321.1"/>
<path d="M383.3 266.4 L388.4 262.8"/>
<path d="M383.2 286.3 L388.0 283.1"/>
<path d="M381.2 297.8 L386.5 294.1"/>
<path d="M414.8 336.3 L409.5 337.0 L404.2 337.8"/>
<path d="M347.9 374.0 L349.9 367.7"/>
<path d="M329.6 371.9 L322.9 369.8"/>
<path d="M362.6 388.7 L360.3 393.0 L358.5 397.6"/>
<path d="M374.2 384.4 L372.4 389.5 L369.9 394.4"/>
<path d="M399.2 400.1 L395.9 403.6 L392.5 407.1"/>
<path d="M357.0 416.1 L354.0 411.1"/>
<path d="M366.7 433.9 L365.6 430.0 L364.7 426.0"/>
<path d="M323.6 405.3 L318.3 405.0 L313.1 404.5"/>
<path d="M423.3 433.5 L417.6 428.0"/>
<path d="M439.5 338.1 L438.4 331.5"/>
<path d="M457.2 385.1 L456.7 380.8 L457.0 376.5"/>
<path d="M462.7 393.2 L457.8 391.7 L452.8 390.2"/>
<path d="M441.7 380.6 L438.3 375.8"/>
<path d="M495.8 281.6 L492.8 278.0 L489.6 274.5"/>
<path d="M513.6 283.5 L513.2 276.0"/>
<path d="M529.5 282.3 L525.3 282.4 L521.0 282.4"/>
<path d="M510.0 317.6 L502.9 317.4"/>
<path d="M504.1 344.7 L503.9 339.6 L502.8 334.7"/>
<path d="M523.5 312.3 L517.3 309.9"/>
<path d="M470.0 321.1 L467.7 317.0 L464.9 313.1"/>
<path d="M488.4 340.8 L489.1 333.8"/>
<path d="M556.4 317.9 L552.5 314.3"/>
<path d="M558.0 336.0 L561.3 329.1"/>
<path d="M560.3 353.7 L557.1 349.1"/>
<path d="M553.0 406.0 L551.5 399.3"/>
<path d="M550.2 324.0 L552.8 318.9"/>
<path d="M544.1 378.2 L539.3 376.7 L534.4 375.7"/>
<path d="M577.6 371.1 L572.4 365.3"/>
<path d="M574.5 367.8 L576.4 362.8 L578.3 357.8"/>
<path d="M593.5 288.9 L594.1 281.6"/>
<path d="M606.1 307.7 L608.8 303.0"/>
<path d="M587.2 290.4 L583.0 287.7 L578.8 285.2"/>
<path d="M631.0 332.0 L626.9 327.7"/>
<path d="M594.1 270.7 L597.0 273.8 L600.7 275.9"/>
</g>
<g font-family="Liberation Sans, sans-serif" fill="#2f3a2a">
<text x="81" y="59" font-size="10.5" font-style="italic" letter-spacing="1.6" opacity=".8">Mountains</text>
<text x="166" y="63.500" font-size="10.5" font-style="italic" letter-spacing="1.6" opacity=".8">Mountains</text>
<text x="176" y="49.500" font-size="10.5" font-style="italic" letter-spacing="1.6" opacity=".8">Needle</text>
<g font-size="9" fill="#33482e" opacity=".9" text-anchor="middle"><text x="158" y="193">San Juan</text><text x="158" y="203">National</text><text x="160" y="213">Forest</text></g>
<text x="31" y="319" font-size="10.500" font-style="italic" letter-spacing="1.300" opacity=".75">Missionary</text>
<text x="47" y="332.500" font-size="10.500" font-style="italic" letter-spacing="1.300" opacity=".75">Ridge</text>
<text x="211" y="324" font-size="10.500" font-style="italic" letter-spacing="1.300" opacity=".75">Grassy</text>
<text x="204" y="337.500" font-size="10.500" font-style="italic" letter-spacing="1.300" opacity=".75">Mountain</text>
<text x="-3" y="391" font-size="11" fill="#2b2b2b">Durango</text>
<text x="202.500" y="438" font-size="10.500" fill="#2b2b2b">Bayfield</text>
<text x="625" y="405" font-size="10.500" fill="#2b2b2b">P</text>
<text x="619.500" y="193.500" font-size="10" font-style="italic" fill="#3f4a38">128</text>
<text font-size="9.500" font-style="italic" fill="#5b93bd" transform="translate(60 417) rotate(-72)">Florida River</text>
<text font-size="9.500" font-style="italic" fill="#5b93bd" transform="translate(191 432) rotate(-86)">Los Pinos River</text>
<text font-size="8.500" font-style="italic" fill="#4d8a96" opacity=".6" transform="translate(331 184) rotate(-60)">Los Pinos River</text>
<text font-size="8.500" font-style="italic" fill="#4d8a96" opacity=".6" transform="translate(388 378) rotate(-72)">Piedra River</text>
<text font-size="8.500" font-style="italic" fill="#4d8a96" opacity=".6" transform="translate(585 232) rotate(-62)">Piedra River</text>
</g>
<path d="M29.500 190c3 1 6 .5 8.500-1.500 2.500 2 5.500 2.500 8.500 1.500 1 4 .5 9-2.500 12.500-2 1.500-4 1.500-6 2.500-2-1-4-1-6-2.500-3-3.500-3.500-8.500-2.500-12.500z" fill="#e8ecd8" stroke="#7a8468" stroke-width=".8"/>
<text x="38" y="200.500" font-size="8.500" text-anchor="middle" fill="#4a5340" font-family="Liberation Sans, sans-serif">550</text>
<use href="#hk" x="37.5" y="67.0" width="17" height="17"/>
<use href="#hk" x="2.0" y="62.5" width="17" height="17"/>
<use href="#hk" x="23.0" y="102.0" width="17" height="17"/>
<use href="#hk" x="36.5" y="157.5" width="17" height="17"/>
<use href="#hk" x="36.5" y="171.0" width="17" height="17"/>
<use href="#hk" x="94.9" y="175.0" width="17" height="17"/>
<use href="#hk" x="-0.5" y="229.5" width="17" height="17"/>
<use href="#hk" x="127.5" y="220.0" width="17" height="17"/>
<use href="#hk" x="127.0" y="230.5" width="17" height="17"/>
<use href="#hk" x="226.1" y="207.0" width="17" height="17"/>
<use href="#hk" x="255.5" y="235.5" width="17" height="17"/>
<use href="#hk" x="440.5" y="156.0" width="17" height="17"/>
<use href="#hk" x="480.5" y="149.3" width="17" height="17"/>
<use href="#hk" x="470.5" y="151.2" width="17" height="17"/>
<use href="#hk" x="458.5" y="172.5" width="17" height="17"/>
<use href="#hk" x="457.0" y="178.0" width="17" height="17"/>
<use href="#hk" x="458.9" y="191.5" width="17" height="17"/>
<use href="#hk" x="516.0" y="176.1" width="17" height="17"/>
<use href="#hk" x="549.5" y="206.5" width="17" height="17"/>
<use href="#hk" x="479.5" y="219.2" width="17" height="17"/>
<use href="#hk" x="483.9" y="251.5" width="17" height="17"/>
<use href="#hk" x="136.0" y="256.9" width="17" height="17"/>
<use href="#hk" x="141.5" y="273.5" width="17" height="17"/>
<use href="#hk" x="234.0" y="269.9" width="17" height="17"/>
<use href="#hk" x="230.8" y="286.3" width="17" height="17"/>
<use href="#hk" x="215.1" y="300.5" width="17" height="17"/>
<use href="#hk" x="42.7" y="334.3" width="17" height="17"/>
<use href="#hk" x="584.8" y="270.2" width="17" height="17"/>
<use href="#hk" x="390.2" y="321.1" width="17" height="17"/>
<use href="#hk" x="532.2" y="340.5" width="17" height="17"/>
<use href="#hk" x="378.8" y="367.9" width="17" height="17"/>
<use href="#hk" x="373.8" y="422.1" width="17" height="17"/>
</svg>
</div>
<div class="b" style="left:7px;top:62px;width:32px;height:64px;background:#fff;box-shadow:0 1px 2px rgba(0,0,0,.3)"></div>
<div class="b" style="left:7px;top:94px;width:32px;height:1px;background:#dcdcdc"></div>
<div class="b" style="left:7px;top:136px;width:32px;height:32px;background:#fff;box-shadow:0 1px 2px rgba(0,0,0,.3)"></div>
<div class="b" style="left:577px;top:62px;width:40px;height:40px;background:#fff;box-shadow:0 1px 2px rgba(0,0,0,.3)"></div>
<div class="b" style="left:577px;top:110px;width:40px;height:120px;background:#fff;box-shadow:0 1px 2px rgba(0,0,0,.3)"></div>
<div class="b" style="left:577px;top:149px;width:40px;height:1px;background:#dcdcdc"></div>
<div class="b" style="left:577px;top:189px;width:40px;height:1px;background:#dcdcdc"></div>
<svg style="left:0;top:0" width="640" height="460" viewBox="0 0 640 460" fill="none">
<g stroke="#6a6a6a" stroke-width="1">
<path d="M19 78.500h9M23.500 74v9M18 111.500h10"/>
<path d="M16 153.200l7-7 7 7M18.500 151.500v7.500h9v-7.500M18.500 149v-2.500h1.500v1.200" stroke-width="1"/>
<path d="M593 80.700l4-4 4 4M593 86.700l4-4 4 4" stroke-width="1.100"/>
<path d="M595.500 124.500h9M595.500 128.500h9M595.500 132.500h9M595.500 136.500h9"/>
<rect x="590.500" y="123.500" width="2.200" height="2.200" stroke-width=".9"/><circle cx="591.600" cy="128.600" r="1" stroke-width=".9"/><rect x="590.500" y="131.500" width="2.200" height="2.200" stroke-width=".9"/><path d="M590.300 137.400l1.300-2.200 1.300 2.200z" stroke-width=".9"/>
<circle cx="595.500" cy="168.800" r="5"/><path d="M599.200 172.500l5.300 5.200" stroke-width="1.100"/><path d="M601.800 174.200l2.800 2.800-1 1-2.800-2.800z" stroke-width=".8"/>
<rect x="589.500" y="203.500" width="15" height="13"/>
<path d="M591.500 208v-2.500h2.500M591.500 205.500l3.200 2.800M602.500 208v-2.500h-2.500M602.500 205.500l-3.200 2.800M591.500 212v2.500h2.500M591.500 214.500l3.200-2.800M602.500 212v2.500h-2.500M602.500 214.500l-3.200-2.800" stroke-width=".9"/>
</g>
</svg>

<div class="b" style="left:0;top:440px;width:632px;height:16px;background:rgba(255,255,255,.8)"></div>
<div class="t" style="left:-1.0px;top:438.54px;font-size:12px;line-height:17px;color:#6b6b6b;letter-spacing:-0.180px;">Esri, CGIAR, USGS | Esri, TomTom, Garmin, SafeGraph, FAO, METI/NASA, USGS, Bureau of Land ...</div>
<div class="t" style="left:540.0px;top:438.54px;font-size:12px;line-height:17px;color:#6b6b6b;letter-spacing:-0.025px;">Powered by Esri</div>
<div class="b" style="left:0;top:456px;width:632px;height:53px;background:#2b2b2b"></div>
<svg style="left:4px;top:474px" width="17" height="17" viewBox="0 0 17 17"><circle cx="8.5" cy="8.5" r="7" fill="none" stroke="#c8c8c8" stroke-width="1"/><rect x="8" y="7.2" width="1" height="4.6" fill="#c8c8c8"/><rect x="7" y="11.5" width="3" height="1" fill="#c8c8c8"/><circle cx="8.5" cy="5.2" r=".8" fill="#c8c8c8"/></svg>
<div class="t" style="left:32.0px;top:471.35px;font-size:14px;line-height:20px;color:#c9c9c9;letter-spacing:0.315px;">Information</div>
<div class="b" style="left:0;top:508px;width:632px;height:350px;background:#f8f8f8"></div>
<div class="b" style="left:8px;top:526px;width:608px;height:66px;background:#fff;box-shadow:0 2px 6px rgba(0,0,0,.12);border-left:2px solid #0079c1;box-sizing:border-box"></div>
<svg style="left:26px;top:552px" width="16" height="14" viewBox="0 0 16 14"><g fill="none" stroke="#0079c1" stroke-width="1"><rect x=".5" y=".5" width="15" height="13"/><path d="M.5 2.500h15M.5 4.500h15M.5 7.500h15M.5 10.500h15M5.500 4.500v9M10.500 4.500v9"/></g></svg>
<div class="t" style="left:58.0px;top:538.05px;font-size:14px;line-height:20px;color:#757575;letter-spacing:0.163px;">Select a record to get started. Click while pressing the Ctrl key to select multiple</div>
<div class="t" style="left:58.0px;top:557.05px;font-size:14px;line-height:20px;color:#757575;letter-spacing:0.164px;">records in the table.</div>
<div class="b" style="left:0;top:858px;width:632px;height:1px;background:#dedede"></div>
<div class="b" style="left:0;top:859px;width:632px;height:27px;background:#fff"></div>
<div class="b" style="left:4px;top:871px;width:616px;height:15px;background:#0079c1;overflow:hidden"></div>
<div class="t" style="left:267.0px;top:875.15px;font-size:14px;line-height:20px;color:#fff;letter-spacing:0.000px;">Create feature</div>
<div class="b" style="left:632px;top:47px;width:1px;height:839px;background:#dedede"></div>
<div class="b" style="left:633px;top:47px;width:51px;height:51px;background:#eaeaea"></div>
<div class="b" style="left:684px;top:47px;width:1px;height:839px;background:#dedede"></div>
<svg style="left:649px;top:66px" width="16" height="14" viewBox="0 0 16 14"><g fill="none" stroke="#151515" stroke-width="1"><rect x=".5" y=".5" width="15" height="13"/><path d="M.5 3.5h15M5.5 3.5v10"/></g><path d="M13 1.5h1.5v1.5z" fill="#151515"/></svg>
<svg style="left:649px;top:117px" width="16" height="14" viewBox="0 0 16 14"><g fill="none" stroke="#4a4a4a" stroke-width="1"><rect x=".5" y=".5" width="15" height="13"/><path d="M3.5 .5v13"/></g></svg>
<svg style="left:649px;top:168px" width="16" height="14" viewBox="0 0 16 14"><g fill="none" stroke="#4a4a4a" stroke-width="1"><rect x=".5" y=".5" width="15" height="13"/><path d="M.5 3.5h15M4.5 3.5v10"/><path d="M13.2 2.6c.4 1.6-.6 3-2.200 3.500-1.600.5-3.200 1.200-3.600 2.700-.3 1.200.4 2.600 1.300 3.800M11.500 13c.1-1.700.8-3.200 2.800-3.300" stroke-width=".9"/></g></svg>

<div class="b" style="left:685px;top:97px;width:1218px;height:1px;background:#dedede"></div>
<div class="b" style="left:937px;top:47px;width:1px;height:50px;background:#dedede"></div>
<svg style="left:0;top:0" width="1903" height="886" viewBox="0 0 1903 886" fill="none">
<g stroke="#151515" stroke-width="1.05" stroke-linejoin="miter">
<path d="M722 65.300l7.600 4-7.600 4.200-7.600-4.200z"/><path d="M714.400 72.500l7.600 4.100 7.600-4.100M714.400 75.600l7.600 4.100 7.600-4.100"/>
</g>
<path d="M896 70.300l4 4 4-4" stroke="#151515" stroke-width="1.4"/>
<path d="M1796.200 70.300l4 4 4-4" stroke="#151515" stroke-width="1.4"/>
<g stroke="#d2d2d2" stroke-width="1">
<circle cx="962" cy="72" r="1.800"/>
<path d="M954.500 64.500l4.300 4.300M955.800 68.900h3.100v-3.100M969.500 64.500l-4.300 4.300M968.200 68.900h-3.100v-3.100M954.500 79.500l4.300-4.300M955.800 75.100h3.100v3.100M969.500 79.500l-4.300-4.300M968.200 75.100h-3.100v3.100"/>
</g>
<g stroke="#4a4a4a" stroke-width="1">
<path d="M1053 65.500h14M1054 67.600h12M1053.500 65.500l4.700 5.300 1 7.700h1.700l1-7.700 4.600-5.300"/>
</g>
<g stroke="#d6d6d6" stroke-width="1">
<path d="M1150.500 68.500l6.500-3.200 8.500 7.200v2.800l-6 3.300-9-7.300zM1150.500 68.500l9 7.300 6-3.300M1159.500 75.800v2.800"/>
</g>
<g stroke="#d6d6d6" stroke-width="1">
<rect x="1308.500" y="65.600" width="12" height="8" rx="1"/><path d="M1313 70h7.500" stroke-width="1.600"/>
<path d="M1305.500 70.600h6.200l-3.100 3.400zM1308.600 74v4.900" fill="#fff"/>
</g>
<g stroke="#4a4a4a" stroke-width="1">
<path d="M1464 66.500h9.200M1464 72.500h9.200M1464 78.500h9.200"/>
<path d="M1459.200 66.200l1.500 1.600 2.300-2.800M1459.200 72l1.500 1.600 2.300-2.800M1459.200 77.200l1.500 1.600 2.300-2.800" stroke-width=".9"/>
</g>
<g stroke="#4a4a4a" stroke-width="1">
<path d="M1580.800 66.500h-5.300v12h5.300M1582.500 65v15M1577.300 72.500h3.500M1578.600 71.200v2.600"/>
<rect x="1584.200" y="66" width="5.700" height="13" fill="#6a6a6a" stroke="none"/>
<path d="M1584.200 72.500h3" stroke="#fff" stroke-width="1.300"/><path d="M1586.300 70.200l2.300 2.300-2.300 2.300z" fill="#fff" stroke="none"/>
</g>
<g stroke="#4a4a4a" stroke-width="1">
<path d="M1887.500 65.500h-6v13h13v-6"/>
<path d="M1886 75c0-4 2.500-6.500 8-6.500M1891 65.500l3.500 3-3.500 3"/>
</g>
</svg>

<div class="t" style="left:742.3px;top:60.75px;font-size:14px;line-height:20px;color:#2b2b2b;letter-spacing:-0.141px;">RecreationSitesINFRA</div>
<div class="t" style="left:982.5px;top:60.75px;font-size:14px;line-height:20px;color:#d6d6d6;letter-spacing:0.179px;">Zoom</div>
<div class="t" style="left:1079.6px;top:60.75px;font-size:14px;line-height:20px;color:#555555;letter-spacing:-0.002px;">Filters</div>
<div class="t" style="left:1178.0px;top:60.75px;font-size:14px;line-height:20px;color:#d6d6d6;letter-spacing:0.133px;">Clear selection</div>
<div class="t" style="left:1333.0px;top:60.75px;font-size:14px;line-height:20px;color:#d6d6d6;letter-spacing:0.042px;">Show selected</div>
<div class="t" style="left:1486.0px;top:60.75px;font-size:14px;line-height:20px;color:#555555;letter-spacing:-0.111px;">Select all</div>
<div class="t" style="left:1602.7px;top:60.75px;font-size:14px;line-height:20px;color:#555555;letter-spacing:0.082px;">Switch selected</div>
<div class="t" style="left:1747.0px;top:60.75px;font-size:14px;line-height:20px;color:#2b2b2b;letter-spacing:0.226px;">More</div>
<div class="b" style="left:695px;top:108px;width:716px;height:32px;border:1px solid #d4d4d4;box-sizing:border-box;background:#fff"></div>
<svg style="left:707px;top:116px" width="15" height="15" viewBox="0 0 15 15"><circle cx="6" cy="6" r="4.3" fill="none" stroke="#6a6a6a" stroke-width="1.1"/><path d="M9.2 9.2l4.3 4.3" stroke="#6a6a6a" stroke-width="1.2" fill="none"/></svg>
<div class="t" style="left:736.5px;top:112.75px;font-size:14px;line-height:20px;color:#777777;letter-spacing:-0.359px;">Search text in SITE_NAME, SITE_SUBTYPE, DEVELOPMENT_STATUS field</div>
<div class="b" style="left:685px;top:150px;width:1210px;height:1px;background:#d8d8d8"></div>
<div class="b" style="left:685px;top:151px;width:1210px;height:40px;background:#f8f8f8"></div>
<div class="b" style="left:685px;top:191px;width:1210px;height:1px;background:#dedede"></div>
<div class="b" style="left:685px;top:232px;width:1210px;height:1px;background:#dedede"></div>
<div class="b" style="left:685px;top:273px;width:1210px;height:1px;background:#dedede"></div>
<div class="b" style="left:685px;top:314px;width:1210px;height:1px;background:#dedede"></div>
<div class="b" style="left:685px;top:355px;width:1210px;height:1px;background:#dedede"></div>
<div class="b" style="left:685px;top:396px;width:1210px;height:1px;background:#dedede"></div>
<div class="b" style="left:685px;top:437px;width:1210px;height:1px;background:#dedede"></div>
<div class="b" style="left:685px;top:478px;width:1210px;height:1px;background:#dedede"></div>
<div class="b" style="left:685px;top:519px;width:1210px;height:1px;background:#dedede"></div>
<div class="b" style="left:685px;top:560px;width:1210px;height:1px;background:#dedede"></div>
<div class="b" style="left:685px;top:601px;width:1210px;height:1px;background:#dedede"></div>
<div class="b" style="left:685px;top:642px;width:1210px;height:1px;background:#dedede"></div>
<div class="b" style="left:685px;top:683px;width:1210px;height:1px;background:#dedede"></div>
<div class="b" style="left:685px;top:724px;width:1210px;height:1px;background:#dedede"></div>
<div class="b" style="left:685px;top:765px;width:1210px;height:1px;background:#dedede"></div>
<div class="b" style="left:685px;top:806px;width:1210px;height:1px;background:#dedede"></div>
<div class="b" style="left:685px;top:847px;width:1210px;height:1px;background:#dedede"></div>
<div class="b" style="left:685px;top:888px;width:1210px;height:1px;background:#dedede"></div>
<div class="b" style="left:742px;top:151px;width:1px;height:725px;background:#dedede"></div>
<div class="b" style="left:942px;top:151px;width:1px;height:725px;background:#dedede"></div>
<div class="b" style="left:1142px;top:151px;width:1px;height:725px;background:#dedede"></div>
<div class="b" style="left:1342px;top:151px;width:1px;height:725px;background:#dedede"></div>
<div class="b" style="left:1542px;top:151px;width:1px;height:725px;background:#dedede"></div>
<div class="b" style="left:1742px;top:151px;width:1px;height:40px;background:#dedede"></div>
<div class="t" style="left:751.2px;top:160.15px;font-size:14px;line-height:20px;color:#2b2b2b;letter-spacing:-0.372px;">SITE_NAME</div>
<div class="t" style="left:951.2px;top:160.15px;font-size:14px;line-height:20px;color:#2b2b2b;letter-spacing:-0.871px;">SITE_SUBTYPE</div>
<div class="t" style="left:1151.2px;top:160.15px;font-size:14px;line-height:20px;color:#2b2b2b;letter-spacing:-0.224px;">DEVELOPMENT_S...</div>
<div class="t" style="left:1351.2px;top:160.15px;font-size:14px;line-height:20px;color:#2b2b2b;letter-spacing:-0.224px;">DEVELOPMENT_S...</div>
<div class="t" style="left:1551.2px;top:160.15px;font-size:14px;line-height:20px;color:#2b2b2b;letter-spacing:-0.598px;">POSS_ID</div>
<div class="t" style="left:1751.2px;top:160.15px;font-size:14px;line-height:20px;color:#2b2b2b;letter-spacing:-0.708px;">NRRS_ID</div>
<svg style="left:893.7px;top:164px" width="8" height="13" viewBox="0 0 8 13"><path d="M3.800 1L7.200 4.900H.4z" fill="#6e7a87"/><path d="M3.800 11.300L7.200 7.300H.4z" fill="#6e7a87"/></svg>
<svg style="left:909.9000000000001px;top:168.9px" width="17" height="4" viewBox="0 0 17 4"><circle cx="2" cy="2" r="1.3" fill="#3a3a3a"/><circle cx="8" cy="2" r="1.3" fill="#3a3a3a"/><circle cx="14" cy="2" r="1.3" fill="#3a3a3a"/></svg>
<svg style="left:1093.7px;top:164px" width="8" height="13" viewBox="0 0 8 13"><path d="M3.800 1L7.200 4.900H.4z" fill="#6e7a87"/><path d="M3.800 11.300L7.200 7.300H.4z" fill="#6e7a87"/></svg>
<svg style="left:1109.9px;top:168.9px" width="17" height="4" viewBox="0 0 17 4"><circle cx="2" cy="2" r="1.3" fill="#3a3a3a"/><circle cx="8" cy="2" r="1.3" fill="#3a3a3a"/><circle cx="14" cy="2" r="1.3" fill="#3a3a3a"/></svg>
<svg style="left:1293.7px;top:164px" width="8" height="13" viewBox="0 0 8 13"><path d="M3.800 1L7.200 4.900H.4z" fill="#6e7a87"/><path d="M3.800 11.300L7.200 7.300H.4z" fill="#6e7a87"/></svg>
<svg style="left:1309.9px;top:168.9px" width="17" height="4" viewBox="0 0 17 4"><circle cx="2" cy="2" r="1.3" fill="#3a3a3a"/><circle cx="8" cy="2" r="1.3" fill="#3a3a3a"/><circle cx="14" cy="2" r="1.3" fill="#3a3a3a"/></svg>
<svg style="left:1493.7px;top:164px" width="8" height="13" viewBox="0 0 8 13"><path d="M3.800 1L7.200 4.900H.4z" fill="#6e7a87"/><path d="M3.800 11.300L7.200 7.300H.4z" fill="#6e7a87"/></svg>
<svg style="left:1509.9px;top:168.9px" width="17" height="4" viewBox="0 0 17 4"><circle cx="2" cy="2" r="1.3" fill="#3a3a3a"/><circle cx="8" cy="2" r="1.3" fill="#3a3a3a"/><circle cx="14" cy="2" r="1.3" fill="#3a3a3a"/></svg>
<svg style="left:1693.7px;top:164px" width="8" height="13" viewBox="0 0 8 13"><path d="M3.800 1L7.200 4.900H.4z" fill="#6e7a87"/><path d="M3.800 11.300L7.200 7.300H.4z" fill="#6e7a87"/></svg>
<svg style="left:1709.9px;top:168.9px" width="17" height="4" viewBox="0 0 17 4"><circle cx="2" cy="2" r="1.3" fill="#3a3a3a"/><circle cx="8" cy="2" r="1.3" fill="#3a3a3a"/><circle cx="14" cy="2" r="1.3" fill="#3a3a3a"/></svg>
<div class="b" style="left:705px;top:200px;width:18px;height:18px;border-radius:3.5px;background:#6a6a6a"></div>
<div class="t" style="left:751.2px;top:199.35px;font-size:14px;line-height:20px;color:#787878;letter-spacing:-1.158px;">GEYSER</div>
<div class="t" style="left:951.2px;top:199.35px;font-size:14px;line-height:20px;color:#787878;letter-spacing:-0.408px;">TRAILHEAD</div>
<div class="t" style="left:1151.2px;top:199.35px;font-size:14px;line-height:20px;color:#787878;letter-spacing:-0.505px;">EXISTING</div>
<div class="t" style="left:1351.5px;top:199.35px;font-size:14px;line-height:20px;color:#787878;letter-spacing:0.000px;">3</div>
<div class="b" style="left:705px;top:241px;width:18px;height:18px;border-radius:3.5px;background:#6a6a6a"></div>
<div class="t" style="left:751.2px;top:240.35px;font-size:14px;line-height:20px;color:#787878;letter-spacing:-0.790px;">SILVER FALLS</div>
<div class="t" style="left:951.2px;top:240.35px;font-size:14px;line-height:20px;color:#787878;letter-spacing:-0.408px;">TRAILHEAD</div>
<div class="t" style="left:1151.2px;top:240.35px;font-size:14px;line-height:20px;color:#787878;letter-spacing:-0.505px;">EXISTING</div>
<div class="t" style="left:1351.5px;top:240.35px;font-size:14px;line-height:20px;color:#787878;letter-spacing:0.000px;">2</div>
<div class="b" style="left:705px;top:282px;width:18px;height:18px;border-radius:3.5px;background:#6a6a6a"></div>
<div class="t" style="left:751.2px;top:281.35px;font-size:14px;line-height:20px;color:#787878;letter-spacing:-0.722px;">TRANSFER TH</div>
<div class="t" style="left:951.2px;top:281.35px;font-size:14px;line-height:20px;color:#787878;letter-spacing:-0.408px;">TRAILHEAD</div>
<div class="t" style="left:1151.2px;top:281.35px;font-size:14px;line-height:20px;color:#787878;letter-spacing:-0.505px;">EXISTING</div>
<div class="t" style="left:1351.5px;top:281.35px;font-size:14px;line-height:20px;color:#787878;letter-spacing:0.000px;">1</div>
<div class="b" style="left:705px;top:323px;width:18px;height:18px;border-radius:3.5px;background:#6a6a6a"></div>
<div class="t" style="left:751.2px;top:322.35px;font-size:14px;line-height:20px;color:#787878;letter-spacing:-0.482px;">EAST HERMOSA</div>
<div class="t" style="left:951.2px;top:322.35px;font-size:14px;line-height:20px;color:#787878;letter-spacing:-0.806px;">INTERPRETIVE SITE</div>
<div class="t" style="left:1151.2px;top:322.35px;font-size:14px;line-height:20px;color:#787878;letter-spacing:-0.505px;">EXISTING</div>
<div class="t" style="left:1351.5px;top:322.35px;font-size:14px;line-height:20px;color:#787878;letter-spacing:0.000px;">3</div>
<div class="b" style="left:705px;top:364px;width:18px;height:18px;border-radius:3.5px;background:#6a6a6a"></div>
<div class="t" style="left:751.2px;top:363.35px;font-size:14px;line-height:20px;color:#787878;letter-spacing:-0.396px;">HENDERSON LAKE</div>
<div class="t" style="left:951.2px;top:363.35px;font-size:14px;line-height:20px;color:#787878;letter-spacing:-0.451px;">DAY USE AREA</div>
<div class="t" style="left:1151.2px;top:363.35px;font-size:14px;line-height:20px;color:#787878;letter-spacing:-0.505px;">EXISTING</div>
<div class="t" style="left:1351.5px;top:363.35px;font-size:14px;line-height:20px;color:#787878;letter-spacing:0.000px;">1</div>
<div class="b" style="left:705px;top:405px;width:18px;height:18px;border-radius:3.5px;background:#6a6a6a"></div>
<div class="t" style="left:751.2px;top:404.35px;font-size:14px;line-height:20px;color:#787878;letter-spacing:-0.685px;">WEST FORK</div>
<div class="t" style="left:951.2px;top:404.35px;font-size:14px;line-height:20px;color:#787878;letter-spacing:-0.408px;">TRAILHEAD</div>
<div class="t" style="left:1151.2px;top:404.35px;font-size:14px;line-height:20px;color:#787878;letter-spacing:-0.505px;">EXISTING</div>
<div class="t" style="left:1351.5px;top:404.35px;font-size:14px;line-height:20px;color:#787878;letter-spacing:0.000px;">3</div>
<div class="b" style="left:705px;top:446px;width:18px;height:18px;border-radius:3.5px;background:#6a6a6a"></div>
<div class="t" style="left:751.2px;top:445.35px;font-size:14px;line-height:20px;color:#787878;letter-spacing:-0.389px;">COYOTE HILL</div>
<div class="t" style="left:951.2px;top:445.35px;font-size:14px;line-height:20px;color:#787878;letter-spacing:-0.408px;">TRAILHEAD</div>
<div class="t" style="left:1151.2px;top:445.35px;font-size:14px;line-height:20px;color:#787878;letter-spacing:-0.505px;">EXISTING</div>
<div class="t" style="left:1351.5px;top:445.35px;font-size:14px;line-height:20px;color:#787878;letter-spacing:0.000px;">1</div>
<div class="b" style="left:705px;top:487px;width:18px;height:18px;border-radius:3.5px;background:#6a6a6a"></div>
<div class="t" style="left:751.2px;top:486.35px;font-size:14px;line-height:20px;color:#787878;letter-spacing:-0.344px;">VALLECITO LAKE</div>
<div class="t" style="left:951.2px;top:486.35px;font-size:14px;line-height:20px;color:#787878;letter-spacing:-0.408px;">TRAILHEAD</div>
<div class="t" style="left:1151.2px;top:486.35px;font-size:14px;line-height:20px;color:#787878;letter-spacing:-0.505px;">EXISTING</div>
<div class="t" style="left:1351.5px;top:486.35px;font-size:14px;line-height:20px;color:#787878;letter-spacing:0.000px;">1</div>
<div class="b" style="left:705px;top:528px;width:18px;height:18px;border-radius:3.5px;background:#6a6a6a"></div>
<div class="t" style="left:751.2px;top:527.35px;font-size:14px;line-height:20px;color:#787878;letter-spacing:-0.684px;">HOUSE CREEK BS</div>
<div class="t" style="left:951.2px;top:527.35px;font-size:14px;line-height:20px;color:#787878;letter-spacing:-0.298px;">BOATING SITE</div>
<div class="t" style="left:1151.2px;top:527.35px;font-size:14px;line-height:20px;color:#787878;letter-spacing:-0.505px;">EXISTING</div>
<div class="t" style="left:1351.5px;top:527.35px;font-size:14px;line-height:20px;color:#787878;letter-spacing:0.000px;">4</div>
<div class="b" style="left:705px;top:569px;width:18px;height:18px;border-radius:3.5px;background:#6a6a6a"></div>
<div class="t" style="left:751.2px;top:568.35px;font-size:14px;line-height:20px;color:#787878;letter-spacing:-0.800px;">UTE</div>
<div class="t" style="left:951.2px;top:568.35px;font-size:14px;line-height:20px;color:#787878;letter-spacing:-0.067px;">CAMPGROUND</div>
<div class="t" style="left:1151.2px;top:568.35px;font-size:14px;line-height:20px;color:#787878;letter-spacing:-0.505px;">EXISTING</div>
<div class="t" style="left:1351.5px;top:568.35px;font-size:14px;line-height:20px;color:#787878;letter-spacing:0.000px;">3</div>
<div class="b" style="left:705px;top:610px;width:18px;height:18px;border-radius:3.5px;background:#6a6a6a"></div>
<div class="t" style="left:751.2px;top:609.35px;font-size:14px;line-height:20px;color:#787878;letter-spacing:-0.761px;">FISH CREEK</div>
<div class="t" style="left:951.2px;top:609.35px;font-size:14px;line-height:20px;color:#787878;letter-spacing:-0.408px;">TRAILHEAD</div>
<div class="t" style="left:1151.2px;top:609.35px;font-size:14px;line-height:20px;color:#787878;letter-spacing:-0.505px;">EXISTING</div>
<div class="t" style="left:1351.5px;top:609.35px;font-size:14px;line-height:20px;color:#787878;letter-spacing:0.000px;">1</div>
<div class="b" style="left:705px;top:651px;width:18px;height:18px;border-radius:3.5px;background:#6a6a6a"></div>
<div class="t" style="left:751.2px;top:650.35px;font-size:14px;line-height:20px;color:#787878;letter-spacing:-0.479px;">SILVER FALLS GUARD STA...</div>
<div class="t" style="left:951.2px;top:650.35px;font-size:14px;line-height:20px;color:#787878;letter-spacing:0.075px;">LOOKOUT/CABIN</div>
<div class="t" style="left:1151.2px;top:650.35px;font-size:14px;line-height:20px;color:#787878;letter-spacing:-0.505px;">EXISTING</div>
<div class="t" style="left:1351.5px;top:650.35px;font-size:14px;line-height:20px;color:#787878;letter-spacing:0.000px;">3</div>
<div class="b" style="left:705px;top:692px;width:18px;height:18px;border-radius:3.5px;background:#6a6a6a"></div>
<div class="t" style="left:751.2px;top:691.35px;font-size:14px;line-height:20px;color:#787878;letter-spacing:0.052px;">HAVILAND</div>
<div class="t" style="left:951.2px;top:691.35px;font-size:14px;line-height:20px;color:#787878;letter-spacing:-0.408px;">TRAILHEAD</div>
<div class="t" style="left:1151.2px;top:691.35px;font-size:14px;line-height:20px;color:#787878;letter-spacing:-0.505px;">EXISTING</div>
<div class="t" style="left:1351.5px;top:691.35px;font-size:14px;line-height:20px;color:#787878;letter-spacing:0.000px;">1</div>
<div class="b" style="left:705px;top:733px;width:18px;height:18px;border-radius:3.5px;background:#6a6a6a"></div>
<div class="t" style="left:751.2px;top:732.35px;font-size:14px;line-height:20px;color:#787878;letter-spacing:-0.503px;">THE BEACH</div>
<div class="t" style="left:951.2px;top:732.35px;font-size:14px;line-height:20px;color:#787878;letter-spacing:-0.451px;">DAY USE AREA</div>
<div class="t" style="left:1151.2px;top:732.35px;font-size:14px;line-height:20px;color:#787878;letter-spacing:-0.505px;">EXISTING</div>
<div class="t" style="left:1351.5px;top:732.35px;font-size:14px;line-height:20px;color:#787878;letter-spacing:0.000px;">1</div>
<div class="b" style="left:705px;top:774px;width:18px;height:18px;border-radius:3.5px;background:#6a6a6a"></div>
<div class="t" style="left:751.2px;top:773.35px;font-size:14px;line-height:20px;color:#787878;letter-spacing:-0.200px;">GOLD RUN</div>
<div class="t" style="left:951.2px;top:773.35px;font-size:14px;line-height:20px;color:#787878;letter-spacing:-0.408px;">TRAILHEAD</div>
<div class="t" style="left:1151.2px;top:773.35px;font-size:14px;line-height:20px;color:#787878;letter-spacing:-0.505px;">EXISTING</div>
<div class="t" style="left:1351.5px;top:773.35px;font-size:14px;line-height:20px;color:#787878;letter-spacing:0.000px;">3</div>
<div class="b" style="left:705px;top:815px;width:18px;height:18px;border-radius:3.5px;background:#6a6a6a"></div>
<div class="t" style="left:751.2px;top:814.35px;font-size:14px;line-height:20px;color:#787878;letter-spacing:-0.454px;">ANDREWS LAKE</div>
<div class="t" style="left:951.2px;top:814.35px;font-size:14px;line-height:20px;color:#787878;letter-spacing:-0.524px;">FISHING SITE</div>
<div class="t" style="left:1151.2px;top:814.35px;font-size:14px;line-height:20px;color:#787878;letter-spacing:-0.505px;">EXISTING</div>
<div class="t" style="left:1351.5px;top:814.35px;font-size:14px;line-height:20px;color:#787878;letter-spacing:0.000px;">4</div>
<div class="b" style="left:705px;top:856px;width:18px;height:18px;border-radius:3.5px;background:#6a6a6a"></div>
<div class="t" style="left:751.2px;top:855.35px;font-size:14px;line-height:20px;color:#787878;letter-spacing:-0.320px;">ASPEN GUARD STATION</div>
<div class="t" style="left:951.2px;top:855.35px;font-size:14px;line-height:20px;color:#787878;letter-spacing:0.075px;">LOOKOUT/CABIN</div>
<div class="t" style="left:1151.2px;top:855.35px;font-size:14px;line-height:20px;color:#787878;letter-spacing:-0.505px;">EXISTING</div>
<div class="t" style="left:1351.5px;top:855.35px;font-size:14px;line-height:20px;color:#787878;letter-spacing:0.000px;">3</div>
<div class="b" style="left:1895px;top:151px;width:8px;height:735px;background:#f1f1f1"></div>
<div class="b" style="left:1897px;top:168px;width:6px;height:93px;background:#c1c1c1"></div>
<div class="b" style="left:685px;top:876px;width:1210px;height:10px;background:#f1f1f1"></div>
<div class="b" style="left:702px;top:878px;width:55px;height:8px;background:#c1c1c1"></div>
<div class="b" style="left:1895px;top:876px;width:8px;height:10px;background:#dcdcdc"></div>
<svg style="left:0;top:0" width="1903" height="886" viewBox="0 0 1903 886"><path d="M694 881.5l-4 3.5 4 3.5z" fill="#505050"/><path d="M1885 879.5l5 5-5 5z" fill="#505050"/><path d="M1899.500 162.500l4-4.500 4 4.500z" fill="#505050"/><path d="M1899.500 865l4.500 4.500 4.500-4.500z" fill="#505050"/><path d="M660.5 882.5l-3 3.5M656.5 882.5l-3 3.5" stroke="#6a6a6a" stroke-width="1" fill="none"/></svg>
</body></html>
